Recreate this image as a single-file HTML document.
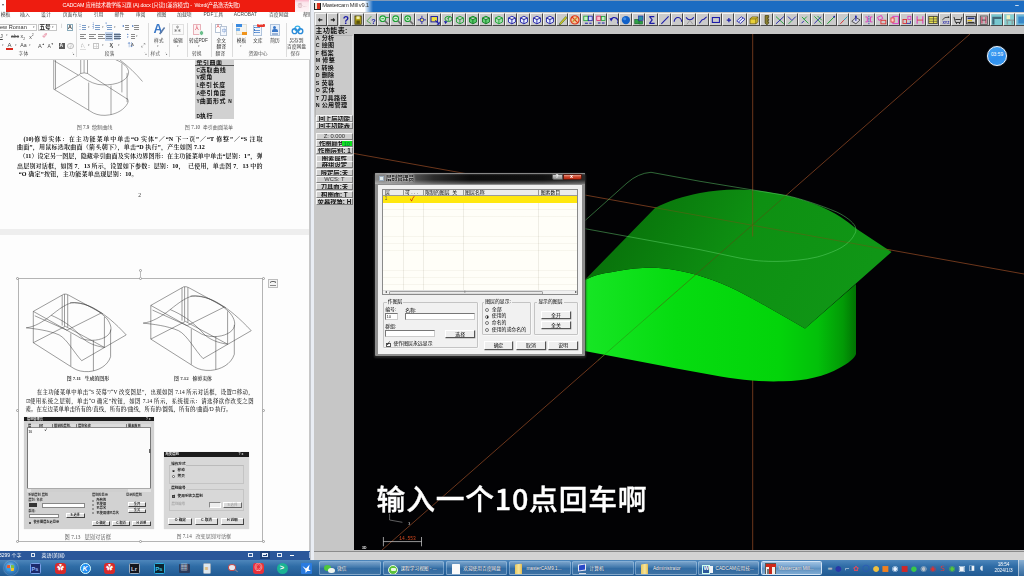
<!DOCTYPE html>
<html lang="zh-CN">
<head>
<meta charset="utf-8">
<title>Mastercam Mill v9.1</title>
<style>
*{box-sizing:border-box;margin:0;padding:0}
html,body{width:1024px;height:576px;overflow:hidden;background:#000}
body{position:relative;font-family:"Liberation Sans","Noto Sans CJK SC",sans-serif;font-size:6px;color:#222;line-height:1}
.a{position:absolute}
.t{position:absolute;white-space:nowrap;line-height:1}
small{font-size:4.8px;letter-spacing:0.2px}
.sf{font-family:"Liberation Serif","Noto Serif CJK SC",serif}
#word,#mc,#task,#dlg,#sub{filter:blur(0.35px)}
/* ---------- Word window ---------- */
#word{left:0;top:0;width:310.4px;height:560px;background:#fdfdfd;overflow:hidden}
#wtitle{left:6px;top:0;width:289px;height:12px;background:#ee1c10}
#wtabs{left:0;top:12px;width:310px;height:8px;background:#fff}
#wrib{left:0;top:20px;width:310px;height:40px;background:#fcfcfc;border-bottom:1px solid #d6d6d6}
#wstat{left:0;top:551px;width:311px;height:9px;background:#2b579a}
/* ---------- Mastercam window ---------- */
#mc{left:310px;top:0;width:714px;height:560px;background:#c6c6c6}
#mctitle{left:3px;top:0;width:711px;height:12px;background:#1b6cc2}
#canvas{left:44.3px;top:34px;width:670px;height:516.3px;background:#020204;overflow:hidden}
.gb{position:absolute;border:0.6px solid #c4c4c4;border-radius:1px;box-shadow:0.5px 0.5px 0 #fff}
.lb{font-size:4.9px;color:#000}
.inp{background:#fff;border:0.7px solid #777;border-right-color:#ccc;border-bottom-color:#ccc}
.btn{background:#efefef;border:0.6px solid #fff;border-right-color:#555;border-bottom-color:#555;box-shadow:0.4px 0.4px 0 #999;font-size:4.9px;color:#000;text-align:center;line-height:7px}
.rad{width:4.2px;height:4.2px;border-radius:50%;background:#fff;border:0.6px solid #777}
.rad i{position:absolute;left:0.8px;top:0.8px;width:1.4px;height:1.4px;border-radius:50%;background:#000}
.tb{position:absolute;top:0;height:12.7px;background:#cbcbcb;border:0.7px solid #f4f4f4;border-right-color:#4a4a4a;border-bottom-color:#4a4a4a;overflow:hidden}
.mb{font-size:6.1px;font-weight:bold;color:#111;letter-spacing:0.35px;font-family:"Liberation Sans","Noto Sans CJK SC",sans-serif}
.mbtn{left:1.6px;width:37.6px;height:7px;background:#d0d0d0;border:0.6px solid #f6f6f6;border-right-color:#7c7c7c;border-bottom-color:#7c7c7c;font-size:6.3px;font-weight:bold;color:#111;text-align:center;line-height:5.8px;white-space:nowrap;overflow:hidden}
.lat{font-weight:normal;color:#333;font-size:5.8px}
.wtab{top:1.3px;font-size:4.9px;color:#444;text-align:center}
.rl{font-size:4.8px;color:#555;text-align:center;width:40px;top:32.1px}
.rb{font-size:4.75px;color:#333;text-align:center;width:40px}
.rsep{position:absolute;top:3px;width:0.6px;height:34px;background:#dcdcdc}
.ri{position:absolute;font-size:5.6px;color:#555;line-height:1;white-space:nowrap}
.p1{font-size:6.05px;color:#000;font-weight:600;text-align:justify;text-align-last:justify;letter-spacing:0}
.p2{font-size:5.4px;color:#111;font-weight:500;text-align:justify;text-align-last:justify}
/* ---------- taskbar ---------- */
#task{left:0;top:560px;width:1024px;height:16px;background:linear-gradient(#4d86bb,#2f6ca6 40%,#215a92)}
</style>
</head>
<body>

<!-- ================= WORD ================= -->
<div id="word" class="a">
  <div id="wtitle" class="a">
    <div class="t" style="left:56.5px;top:3px;font-size:5.3px;color:#fff;letter-spacing:-0.2px">CADCAM 应用技术教学练习题 (A).docx [只读] [兼容模式] -&nbsp; Word(产品激活失败)</div>
  </div>
  <div class="a" style="left:0;top:0;width:6px;height:12px;background:#fff"></div>
  <div class="t" style="left:2px;top:4px;font-size:3.6px;color:#555">▾</div>
  <div class="a" style="left:295px;top:0;width:14px;height:12px;background:linear-gradient(#f8b8cc 0,#fbe6ec 22%,#fff6f8 100%)"></div>
  <div class="t" style="left:297.4px;top:3.4px;font-size:5px;color:#c8a0a8">登...</div>
  <div id="wtabs" class="a">
    <div class="t wtab" style="left:-14.4px;width:40px">模板</div>
    <div class="t wtab" style="left:5px;width:40px">插入</div>
    <div class="t wtab" style="left:26px;width:40px">设计</div>
    <div class="t wtab" style="left:52.5px;width:40px">页面布局</div>
    <div class="t wtab" style="left:78.4px;width:40px">引用</div>
    <div class="t wtab" style="left:99.4px;width:40px">邮件</div>
    <div class="t wtab" style="left:120.6px;width:40px">审阅</div>
    <div class="t wtab" style="left:141.6px;width:40px">视图</div>
    <div class="t wtab" style="left:164.4px;width:40px">加载项</div>
    <div class="t wtab" style="left:193.4px;width:40px">PDF工具</div>
    <div class="t wtab" style="left:225.3px;width:40px">ACROBAT</div>
    <div class="t wtab" style="left:258.75px;width:40px">百度网盘</div>
    <div class="t wtab" style="left:288px;width:40px">帮助</div>
  </div>
  <div id="wrib" class="a">
    <div class="a" style="left:-2px;top:3.6px;width:39px;height:7.6px;border:0.6px solid #c6c6c6;background:#fff"></div>
    <div class="t" style="left:0;top:4.9px;font-size:5.6px;color:#333">ew Roman</div><div class="t" style="left:33px;top:5.6px;font-size:3.4px;color:#666">▾</div>
    <div class="a" style="left:37.6px;top:3.6px;width:19px;height:7.6px;border:0.6px solid #c6c6c6;background:#fff"></div>
    <div class="t" style="left:39.4px;top:4.7px;font-size:5.6px;color:#222;font-weight:bold">五号</div><div class="t" style="left:52.4px;top:5.6px;font-size:3.4px;color:#666">▾</div>
    <div class="ri" style="left:58.6px;top:4.2px;color:#999">㆐</div>
    <div class="a" style="left:66.6px;top:4px;width:6.6px;height:7px;border:0.6px solid #8ab;"></div><div class="ri" style="left:67.9px;top:4.7px;font-size:5.4px;color:#333;font-weight:bold">A</div>
    <div class="ri" style="left:0;top:13.6px;color:#444"><u>J</u></div><div class="ri" style="left:6px;top:14.4px;font-size:3.4px;color:#777">▾</div>
    <div class="ri" style="left:11px;top:13.8px;font-size:5px;color:#555"><s>abc</s></div>
    <div class="ri" style="left:20.6px;top:13.6px;font-size:5.2px;color:#444">x<sub style="font-size:3.4px">2</sub></div>
    <div class="ri" style="left:29.2px;top:13.6px;font-size:5.2px;color:#444">x<sup style="font-size:3.4px">2</sup></div>
    <div class="ri" style="left:41.6px;top:12.8px;font-size:6.6px;color:#e06a86">✐</div>
    <div class="ri" style="left:2.4px;top:24px;font-size:3.4px;color:#777">▾</div>
    <div class="ri" style="left:7.4px;top:22.4px;font-size:6px;color:#444">A</div><div class="a" style="left:6.4px;top:28.2px;width:6.6px;height:1.6px;background:#d8281c"></div><div class="ri" style="left:15.4px;top:24px;font-size:3.4px;color:#777">▾</div>
    <div class="ri" style="left:20.2px;top:23px;font-size:5.2px;color:#444">Aa</div><div class="ri" style="left:28.6px;top:24px;font-size:3.4px;color:#777">▾</div>
    <div class="ri" style="left:38px;top:22.8px;font-size:5.6px;color:#444">A<sup style="font-size:3px">▲</sup></div>
    <div class="ri" style="left:47.4px;top:23.4px;font-size:5px;color:#444">A<sup style="font-size:3px">▼</sup></div>
    <div class="a" style="left:58.6px;top:22.6px;width:6px;height:6.4px;background:#5a5a5a"></div><div class="ri" style="left:59.4px;top:23.2px;font-size:5px;color:#fff;font-weight:bold">A</div>
    <div class="a" style="left:67.4px;top:22.8px;width:6.2px;height:6.2px;border-radius:50%;border:0.6px solid #bbb"></div><div class="ri" style="left:68.6px;top:23.6px;font-size:4.4px;color:#bbb">字</div>
    <div class="a" style="left:81.6px;top:5.0px;width:4.6px;height:0.7px;background:#7a9cc8"></div><div class="a" style="left:81.6px;top:7.2px;width:4.6px;height:0.7px;background:#7a9cc8"></div><div class="a" style="left:81.6px;top:9.4px;width:4.6px;height:0.7px;background:#7a9cc8"></div><div class="ri" style="left:79.4px;top:3.2px;font-size:3px;color:#4a78c0;line-height:2.2px">▪<br>▪<br>▪</div><div class="ri" style="left:88px;top:5.6px;font-size:3.4px;color:#777">▾</div>
    <div class="a" style="left:95.2px;top:5.0px;width:4.6px;height:0.7px;background:#7a9cc8"></div><div class="a" style="left:95.2px;top:7.2px;width:4.6px;height:0.7px;background:#7a9cc8"></div><div class="a" style="left:95.2px;top:9.4px;width:4.6px;height:0.7px;background:#7a9cc8"></div><div class="ri" style="left:92.6px;top:3.8px;font-size:2.6px;color:#4a78c0;line-height:2.2px">1<br>2<br>3</div><div class="ri" style="left:101.6px;top:5.6px;font-size:3.4px;color:#777">▾</div>
    <div class="a" style="left:107.4px;top:4.6px;width:4.6px;height:0.7px;background:#7a9cc8"></div><div class="a" style="left:107.4px;top:6.8px;width:4.6px;height:0.7px;background:#7a9cc8"></div><div class="a" style="left:107.4px;top:9.0px;width:4.6px;height:0.7px;background:#7a9cc8"></div><div class="ri" style="left:105.6px;top:3.4px;font-size:2.6px;color:#4a78c0;line-height:2.2px">a<br>&nbsp;i<br>&nbsp;&nbsp;·</div><div class="ri" style="left:114.2px;top:5.6px;font-size:3.4px;color:#777">▾</div>
    <div class="a" style="left:125px;top:5.2px;width:4.4px;height:0.7px;background:#8a8a8a"></div><div class="a" style="left:125px;top:7.2px;width:4.4px;height:0.7px;background:#8a8a8a"></div><div class="a" style="left:125px;top:9.2px;width:4.4px;height:0.7px;background:#8a8a8a"></div><div class="ri" style="left:122.4px;top:5.2px;font-size:3.6px;color:#4a78c0">◂</div>
    <div class="a" style="left:134.2px;top:5.2px;width:4.4px;height:0.7px;background:#8a8a8a"></div><div class="a" style="left:134.2px;top:7.2px;width:4.4px;height:0.7px;background:#8a8a8a"></div><div class="a" style="left:134.2px;top:9.2px;width:4.4px;height:0.7px;background:#8a8a8a"></div><div class="ri" style="left:131.6px;top:5.2px;font-size:3.6px;color:#4a78c0">▸</div>
    <div class="a" style="left:79.6px;top:14.2px;width:6.4px;height:0.7px;background:#8a8a8a"></div><div class="a" style="left:79.6px;top:16.3px;width:4.5px;height:0.7px;background:#8a8a8a"></div><div class="a" style="left:79.6px;top:18.4px;width:6.4px;height:0.7px;background:#8a8a8a"></div>
    <div class="a" style="left:89.4px;top:14.2px;width:6.4px;height:0.7px;background:#8a8a8a"></div><div class="a" style="left:89.4px;top:16.3px;width:4.5px;height:0.7px;background:#8a8a8a"></div><div class="a" style="left:89.4px;top:18.4px;width:6.4px;height:0.7px;background:#8a8a8a"></div>
    <div class="a" style="left:98.4px;top:14.2px;width:6.4px;height:0.7px;background:#8a8a8a"></div><div class="a" style="left:98.4px;top:16.3px;width:4.5px;height:0.7px;background:#8a8a8a"></div><div class="a" style="left:98.4px;top:18.4px;width:6.4px;height:0.7px;background:#8a8a8a"></div>
    <div class="a" style="left:104.6px;top:12.2px;width:8.6px;height:8.4px;background:#c5d6ee"></div><div class="a" style="left:105.8px;top:14.2px;width:6.4px;height:0.7px;background:#6a7a90"></div><div class="a" style="left:105.8px;top:16.3px;width:6.4px;height:0.7px;background:#6a7a90"></div><div class="a" style="left:105.8px;top:18.4px;width:6.4px;height:0.7px;background:#6a7a90"></div>
    <div class="a" style="left:114.4px;top:13.2px;width:6px;height:6.8px;background:#b8c8dc"></div><div class="a" style="left:114.2px;top:14.2px;width:6.4px;height:0.7px;background:#5a6a80"></div><div class="a" style="left:114.2px;top:16.3px;width:6.4px;height:0.7px;background:#5a6a80"></div><div class="a" style="left:114.2px;top:18.4px;width:6.4px;height:0.7px;background:#5a6a80"></div>
    <div class="a" style="left:130.6px;top:14.2px;width:4.2px;height:0.7px;background:#8a8a8a"></div><div class="a" style="left:130.6px;top:16.3px;width:4.2px;height:0.7px;background:#8a8a8a"></div><div class="a" style="left:130.6px;top:18.4px;width:4.2px;height:0.7px;background:#8a8a8a"></div><div class="ri" style="left:126.6px;top:12.6px;font-size:3.4px;color:#4a78c0;line-height:3.4px">▴<br>▾</div><div class="ri" style="left:136px;top:14.6px;font-size:3.4px;color:#777">▾</div>
    <div class="ri" style="left:79.6px;top:22.6px;font-size:6px;color:#666">♘</div><div class="a" style="left:79.6px;top:28.6px;width:6px;height:1.2px;background:#ddd"></div><div class="ri" style="left:88px;top:24px;font-size:3.4px;color:#777">▾</div>
    <div class="a" style="left:93.4px;top:22.8px;width:6px;height:6px;border:0.6px solid #c4c4c4;background:linear-gradient(#c4c4c4,#c4c4c4) 50% 0/0.5px 100% no-repeat,linear-gradient(#c4c4c4,#c4c4c4) 0 50%/100% 0.5px no-repeat"></div><div class="ri" style="left:101.6px;top:24px;font-size:3.4px;color:#777">▾</div>
    <div class="ri" style="left:109.6px;top:22.8px;font-size:5.2px;color:#444;font-weight:bold">Ӽ</div><div class="ri" style="left:118px;top:24px;font-size:3.4px;color:#777">▾</div>
    <div class="ri" style="left:127.4px;top:22.6px;font-size:5.6px;color:#4a78c0">⇅</div><div class="ri" style="left:131px;top:23.4px;font-size:4.4px;color:#666">A</div>
    <div class="ri" style="left:141px;top:23px;font-size:5.4px;color:#555">⤢</div>
    <div class="rsep" style="left:75.8px"></div>
    <div class="rsep" style="left:147.7px"></div>
    <div class="rsep" style="left:168.6px"></div>
    <div class="rsep" style="left:186.5px"></div>
    <div class="rsep" style="left:210.8px"></div>
    <div class="rsep" style="left:231.9px"></div>
    <div class="rsep" style="left:285.8px"></div>
    <div class="t rl" style="left:3.3999999999999986px">字体</div>
    <div class="t rl" style="left:89.4px">段落</div>
    <div class="t rl" style="left:135.3px">样式</div>
    <div class="t rl" style="left:176.7px">转换</div>
    <div class="t rl" style="left:200.2px">翻译</div>
    <div class="t rl" style="left:238px">资源中心</div>
    <div class="t rl" style="left:275.2px">保存</div>
    <div class="ri" style="left:71.6px;top:33px;font-size:3.2px;color:#777">↘</div><div class="ri" style="left:144px;top:33px;font-size:3.2px;color:#777">↘</div><div class="ri" style="left:164.6px;top:33px;font-size:3.2px;color:#777">↘</div>
    <div class="ri" style="left:153.6px;top:2.6px;font-size:12.5px;color:#3a78c8;font-weight:bold">A</div><svg class="a" style="left:158px;top:6px" width="8" height="9" viewBox="0 0 8 9"><path d="M1,7.6 L6,1 L7.2,2 L2.4,8.4 Z" fill="#5a7aa8"/></svg>
    <div class="t rb" style="left:138.8px;top:18.8px">样式</div><div class="ri" style="left:157.4px;top:24.6px;font-size:3.4px;color:#777">▾</div>
    <div class="a" style="left:171.6px;top:3.6px;width:12.6px;height:11.6px;border:0.6px solid #e0e0e0;background:#fafafa"></div><div class="ri" style="left:173.6px;top:5.6px;font-size:8px;color:#555">⁂</div>
    <div class="t rb" style="left:158px;top:18.8px">编辑</div><div class="ri" style="left:177px;top:24.6px;font-size:3.4px;color:#777">▾</div>
    <div class="a" style="left:192.6px;top:3.6px;width:8.6px;height:11px;border:0.6px solid #e8b0b8;background:#fdf2f3;border-radius:0.6px"></div><div class="ri" style="left:194.6px;top:5.2px;font-size:6.6px;color:#e05060">⅄</div><div class="a" style="left:199px;top:10.4px;width:5.4px;height:5.4px;border-radius:50%;background:#6cbf8c;border:0.6px solid #fff"></div>
    <div class="t rb" style="left:178.4px;top:18.8px">转成PDF</div><div class="ri" style="left:197.6px;top:24.6px;font-size:3.4px;color:#777">▾</div>
    <div class="a" style="left:215.4px;top:3.8px;width:7px;height:9.4px;border:0.6px solid #b8c4d4;background:#fff"></div><div class="a" style="left:220.4px;top:6.4px;width:7px;height:9.4px;border:0.6px solid #b8c4d4;background:#f4f8fe"></div><div class="ri" style="left:216.6px;top:5.4px;font-size:4.6px;color:#e05050">A</div><div class="ri" style="left:222px;top:9px;font-size:4.2px;color:#4a78c0">中</div>
    <div class="t rb" style="left:201.2px;top:18.8px">全文</div><div class="t rb" style="left:201.2px;top:24.6px">翻译</div>
    <div class="a" style="left:235.6px;top:4px;width:11.4px;height:11.4px;background:#f4f4f0;border:0.5px solid #e0e0d8"></div><div class="a" style="left:236px;top:4.4px;width:6px;height:3px;background:#3a8ae0"></div><div class="a" style="left:236px;top:8.2px;width:4.4px;height:3px;background:#7ab4ec"></div><div class="a" style="left:241.6px;top:11.6px;width:5px;height:3.4px;background:#f0941c"></div>
    <div class="t rb" style="left:221.4px;top:18.8px">模板</div><div class="ri" style="left:240.4px;top:24.6px;font-size:3.4px;color:#777">▾</div>
    <div class="a" style="left:252.6px;top:5px;width:9.6px;height:11px;border:0.6px solid #b0c4dc;background:#f2f6fc"></div><div class="a" style="left:255.4px;top:7.4px;width:5.0px;height:0.7px;background:#6a9ad8"></div><div class="a" style="left:255.4px;top:9.8px;width:5.0px;height:0.7px;background:#6a9ad8"></div><div class="a" style="left:255.4px;top:12.2px;width:5.0px;height:0.7px;background:#6a9ad8"></div><div class="a" style="left:253.6px;top:7px;width:1.4px;height:1.4px;background:#3a78c8"></div><div class="a" style="left:253.6px;top:9.4px;width:1.4px;height:1.4px;background:#3a78c8"></div><div class="a" style="left:253.6px;top:11.8px;width:1.4px;height:1.4px;background:#3a78c8"></div><div class="a" style="left:257.2px;top:3.6px;width:7.6px;height:3.4px;border-radius:1px;background:#e8382c"></div><div class="ri" style="left:258px;top:4px;font-size:2.6px;color:#fff;font-weight:bold">New</div>
    <div class="t rb" style="left:237.8px;top:18.8px">文库</div>
    <div class="a" style="left:269.6px;top:4px;width:10.6px;height:12px;border:0.6px solid #b0c4dc;background:#eaf1fb"></div><div class="a" style="left:273.4px;top:5.6px;width:3px;height:3px;border-radius:50%;background:#3a78c8"></div><div class="a" style="left:272px;top:9px;width:5.8px;height:2.6px;border-radius:2px 2px 0 0;background:#3a78c8"></div><div class="a" style="left:272px;top:12.6px;width:5.6px;height:0.6px;background:#9ab4d8"></div><div class="a" style="left:272px;top:14.2px;width:5.6px;height:0.6px;background:#9ab4d8"></div>
    <div class="t rb" style="left:255px;top:18.8px">简历</div>
    <svg class="a" style="left:290.6px;top:5px" width="13" height="10" viewBox="0 0 13 10"><circle cx="6.5" cy="3.6" r="2.5" fill="none" stroke="#38b0e8" stroke-width="1.4"/><circle cx="3.6" cy="6.2" r="2.4" fill="none" stroke="#2a8ad8" stroke-width="1.4"/><circle cx="9.4" cy="6.2" r="2.4" fill="none" stroke="#2a8ad8" stroke-width="1.4"/></svg>
    <div class="t rb" style="left:276.4px;top:18.8px">另存到</div><div class="t rb" style="left:276.4px;top:24.6px">百度网盘</div>
  </div>
  <div id="wdoc" class="a" style="left:0;top:60px;width:310px;height:491px;overflow:hidden">
    <svg class="a" style="left:0;top:0" width="310" height="70" viewBox="0 60 310 70" fill="none" stroke="#4a4a4a" stroke-width="0.5"><path d="M 53.7,59.7 V 89.5 M 55.5,59.7 V 89.5 M 54.3,60.9 L 78.4,75.2 M 54.3,89.5 L 78.4,75.2 L 80.7,73.5 M 80.7,59.7 V 73.5 M 84.1,59.7 V 72.7 M 87.5,59.7 V 73.5 M 80.7,73.5 Q 84.1,72.2 87.5,73.5 M 87.5,73.5 L 127.6,99.3 M 54.3,89.5 L 93.3,113.0 C 97.9,115.3 103.6,115.9 109.3,114.9 C 117.3,113.6 124.2,109.6 127.6,103.3 C 128.6,101.3 128.2,99.5 126.7,98.1 M 115.6,59.7 C 123.1,62.6 128.2,67.2 128.6,71.8 C 128.8,76.9 124.2,80.9 117.3,83.2 C 111.6,85.0 103.6,85.3 97.9,84.4 C 91.0,83.0 84.1,78.6 79.5,75.2 M 119.6,59.7 C 128.8,66.6 135.7,73.5 142.5,81.5 M 88.7,82.6 V 110.1 M 111.0,85.5 V 114.7 M 121.9,63.7 V 92.4 M 127.1,72.9 V 102.1"/></svg>
    <div class="t sf" style="left:74.5px;top:64.6px;font-size:5.1px;color:#444;width:40px;text-align:center">图 7.9&nbsp;&nbsp;绘制曲线</div>
    <div class="a" style="left:195.4px;top:0;width:39px;height:59px;background:#d1d1d1"></div>
    <div class="a" style="left:195.4px;top:4.6px;width:39px;height:0.7px;background:#555"></div>
    <div class="t" style="left:196.4px;top:-1.2px;font-size:6px;font-weight:bold;color:#111;letter-spacing:0.55px">牵引曲面</div>
    <div class="t" style="left:196.4px;top:6.8px;font-size:6px;font-weight:bold;color:#111;letter-spacing:0.55px"><small>C</small>选取曲线</div>
    <div class="t" style="left:196.4px;top:14.4px;font-size:6px;font-weight:bold;color:#111;letter-spacing:0.55px"><small>V</small>视角</div>
    <div class="t" style="left:196.4px;top:22.2px;font-size:6px;font-weight:bold;color:#111;letter-spacing:0.55px"><small>L</small>牵引长度</div>
    <div class="t" style="left:196.4px;top:30.0px;font-size:6px;font-weight:bold;color:#111;letter-spacing:0.55px"><small>A</small>牵引角度</div>
    <div class="t" style="left:196.4px;top:37.6px;font-size:6px;font-weight:bold;color:#111;letter-spacing:0.55px"><small>Y</small>曲面形式 <small>N</small></div>
    <div class="t" style="left:196.4px;top:52.8px;font-size:6px;font-weight:bold;color:#111;letter-spacing:0.55px"><small>D</small>执行</div>
    <div class="t sf" style="left:184px;top:64.6px;font-size:5.1px;color:#444;width:50px;text-align:center">图 7.10&nbsp;&nbsp;牵引曲面菜单</div>
    <div class="t sf p1" style="left:23.4px;top:75.5px;width:239.1px">(10)修剪实体：在主功能菜单中单击“O 实体”／“N 下一页”／“T 修整”／“S 注取</div>
    <div class="t sf p1" style="left:17px;top:84.3px;width:187.7px">曲面”，用鼠标选取曲面（箭头朝下），单击“D 执行”，产生如图 7.12</div>
    <div class="t sf p1" style="left:19.4px;top:93.3px;width:243.1px">（11）设定另一图层，隐藏牵引曲面及实体边界图形：在主功能菜单中单击“层别：1”，弹</div>
    <div class="t sf p1" style="left:17px;top:102.7px;width:245.5px">出层别对话框，如图 7．13 所示，设置如下参数：层别：10，&nbsp;&nbsp;已使用，单击图 7．13 中的</div>
    <div class="t sf p1" style="left:18.8px;top:111.4px;width:118.7px">“O 确定”按钮，主功能菜单出现层别：10。</div>
    <div class="t sf" style="left:138.2px;top:133px;font-size:5.6px;color:#333">2</div>
    <div class="a" style="left:0;top:169px;width:309px;height:5.6px;background:#eeeeee"></div>
    <div class="a" style="left:309.2px;top:0;width:0.8px;height:491px;background:#c8c8c8"></div>
    <div class="a" style="left:17.6px;top:218.2px;width:245.6px;height:263.6px;border:0.6px solid #b4b4b4"></div>
    <div class="a" style="left:16.1px;top:216.7px;width:3px;height:3px;border-radius:50%;background:#fff;border:0.5px solid #999"></div>
    <div class="a" style="left:138.9px;top:216.7px;width:3px;height:3px;border-radius:50%;background:#fff;border:0.5px solid #999"></div>
    <div class="a" style="left:261.7px;top:216.7px;width:3px;height:3px;border-radius:50%;background:#fff;border:0.5px solid #999"></div>
    <div class="a" style="left:16.1px;top:348.5px;width:3px;height:3px;border-radius:50%;background:#fff;border:0.5px solid #999"></div>
    <div class="a" style="left:261.7px;top:348.5px;width:3px;height:3px;border-radius:50%;background:#fff;border:0.5px solid #999"></div>
    <div class="a" style="left:16.1px;top:480.3px;width:3px;height:3px;border-radius:50%;background:#fff;border:0.5px solid #999"></div>
    <div class="a" style="left:138.9px;top:480.3px;width:3px;height:3px;border-radius:50%;background:#fff;border:0.5px solid #999"></div>
    <div class="a" style="left:261.7px;top:480.3px;width:3px;height:3px;border-radius:50%;background:#fff;border:0.5px solid #999"></div>
    <div class="a" style="left:138.9px;top:209.1px;width:3px;height:3px;border-radius:50%;background:#fff;border:0.5px solid #999"></div>
    <div class="a" style="left:140.1px;top:212px;width:0.6px;height:6px;background:#bbb"></div>
    <div class="a" style="left:268.4px;top:218.6px;width:9.6px;height:9.6px;background:#f4f4f4;border:0.6px solid #bdbdbd"></div><div class="a" style="left:270.4px;top:221px;width:5.6px;height:2.4px;border-radius:2.4px 2.4px 0 0;border:0.8px solid #666;border-bottom:none"></div><div class="a" style="left:270px;top:224.6px;width:6.4px;height:0.7px;background:#888"></div>
    <svg class="a" style="left:0;top:220px" width="280" height="100" viewBox="0 280 280 100" fill="none" stroke="#3a3a3a" stroke-width="0.5"><path d="M 33.3,311.4 L 63.8,294.2 Q 66.1,293.6 68.4,295.0 L 102.8,313.8 M 70.0,302.8 C 82.5,301.3 95.0,307.5 105.2,316.9 C 109.8,321.6 111.9,327.1 110.6,331.0 C 109.1,336.4 101.2,340.3 91.9,340.3 C 85.6,340.3 80.9,338.8 77.8,336.4 M 33.3,311.4 L 77.8,336.4 M 33.3,311.4 V 342.7 M 62.2,295.2 V 325.5 M 64.5,294.2 V 326.3 M 67.7,294.9 V 327.1 M 70.8,333.3 V 366.1 M 93.4,340.3 V 370.8 M 104.4,316.9 V 347.4 M 110.6,329.4 V 356.8 M 33.3,342.7 L 73.9,368.5 C 77.8,370.8 82.5,371.9 88.8,371.6 C 98.1,370.8 107.5,366.1 110.6,356.8 M 33.3,342.7 L 65.3,326.3 L 104.4,347.4 M 34.8,315.8 L 66.9,330.2 M 66.9,330.2 L 101.2,313.0 M 26.2,327.8 C 34.1,327.1 43.4,321.6 51.2,315.3 C 59.1,309.1 65.3,304.4 71.6,302.8 M 71.6,302.8 C 87.2,302.1 104.4,311.4 126.2,334.9 M 126.2,334.9 L 81.7,360.7 M 26.2,327.8 C 35.6,328.9 48.1,330.2 59.1,334.9 C 66.9,338.8 74.7,353.6 81.7,360.7 M 51.2,315.3 C 60.6,319.2 71.6,325.5 82.5,338.0 C 87.2,342.7 95.0,346.1 104.4,347.4"/><path d="M 150.8,305.4 L 183.7,286.8 Q 186.2,286.2 188.8,287.7 L 225.9,307.9 M 190.5,296.1 C 204.0,294.4 217.5,301.2 228.4,311.3 C 233.5,316.4 235.7,322.3 234.3,326.5 C 232.6,332.4 224.2,336.6 214.1,336.6 C 207.3,336.6 202.3,334.9 198.9,332.4 M 150.8,305.4 L 198.9,332.4 M 150.8,305.4 V 339.1 M 182.0,287.8 V 320.6 M 184.6,286.8 V 321.4 M 187.9,287.5 V 322.3 M 191.3,329.0 V 364.5 M 215.8,336.6 V 369.5 M 227.6,311.3 V 344.2 M 234.3,324.8 V 354.3 M 150.8,339.1 L 194.7,367.0 C 198.9,369.5 204.0,370.7 210.7,370.4 C 220.8,369.5 231.0,364.5 234.3,354.3 M 150.8,339.1 L 185.4,321.4 L 227.6,344.2 M 152.5,310.1 L 187.1,325.6 M 187.1,325.6 L 224.2,307.1 M 143.2,323.1 C 151.6,322.3 161.8,316.4 170.2,309.6 C 178.6,302.9 185.4,297.8 192.1,296.1 M 192.1,296.1 C 209.0,295.3 227.6,305.4 251.2,330.7 M 251.2,330.7 L 203.1,358.6 M 143.2,323.1 C 153.3,324.3 166.8,325.6 178.6,330.7 C 187.1,334.9 195.5,351.0 203.1,358.6 M 170.2,309.6 C 180.3,313.8 192.1,320.6 204.0,334.1 C 209.0,339.1 217.5,342.9 227.6,344.2"/></svg>
    <div class="t sf" style="left:57.9px;top:317.4px;font-size:4.9px;color:#333;width:60px;text-align:center;font-weight:bold">图 7.11&nbsp;&nbsp;&nbsp;生成的图形</div>
    <div class="t sf" style="left:163px;top:317.4px;font-size:4.9px;color:#333;width:60px;text-align:center;font-weight:bold">图 7.12&nbsp;&nbsp;&nbsp;修剪实体</div>
    <div class="a" style="left:24.2px;top:357.2px;width:130.3px;height:112.2px;background:#d2d2d2;box-shadow:0 0 0.6px #888"></div>
    <div class="a" style="left:24.2px;top:357.2px;width:130.3px;height:4.3px;background:#1a1a1a"></div>
    <div class="t" style="left:27.0px;top:357.8px;font-size:3.2px;color:#eee;font-weight:bold;">层别管理员</div>
    <div class="t" style="left:146.0px;top:357.8px;font-size:3.2px;color:#ddd;font-weight:bold;">? x</div>
    <div class="a" style="left:26.9px;top:364.0px;width:124.1px;height:68.0px;background:#fbfbfb;border:0.5px solid #777"></div>
    <div class="a" style="left:26.9px;top:364.0px;width:124.1px;height:4.4px;background:#dcdcdc;border-bottom:0.5px solid #888"></div>
    <div class="t" style="left:28.0px;top:364.7px;font-size:3.2px;color:#222;font-weight:bold;">层</div>
    <div class="t" style="left:40.0px;top:364.7px;font-size:3.2px;color:#222;font-weight:bold;">可</div>
    <div class="t" style="left:54.0px;top:364.7px;font-size:3.2px;color:#222;font-weight:bold;">限制的层别.</div>
    <div class="t" style="left:78.0px;top:364.7px;font-size:3.2px;color:#222;font-weight:bold;">层别名称</div>
    <div class="t" style="left:128.0px;top:364.7px;font-size:3.2px;color:#222;font-weight:bold;">图素数目</div>
    <div class="a" style="left:38.6px;top:364.0px;width:0.5px;height:4.4px;background:#777"></div>
    <div class="a" style="left:51.6px;top:364.0px;width:0.5px;height:4.4px;background:#777"></div>
    <div class="a" style="left:76.0px;top:364.0px;width:0.5px;height:4.4px;background:#777"></div>
    <div class="a" style="left:125.6px;top:364.0px;width:0.5px;height:4.4px;background:#777"></div>
    <div class="t" style="left:28.4px;top:371.0px;font-size:3.2px;color:#444;font-weight:bold;">10</div>
    <div class="t" style="left:44.6px;top:369.2px;font-size:3.6px;color:#222;font-weight:bold;">✓</div>
    <div class="a" style="left:26.9px;top:428.2px;width:124.1px;height:3.8px;background:#e2e2e2;border-top:0.5px solid #aaa"></div>
    <div class="a" style="left:31.0px;top:428.8px;width:97.0px;height:2.8px;background:#cfcfcf"></div>
    <div class="a" style="left:148.6px;top:389.0px;width:2.8px;height:3.6px;background:#ddd;border:0.5px solid #666"></div>
    <div class="t" style="left:28.0px;top:434.1px;font-size:3.2px;color:#333;font-weight:bold;">系统层别  层别</div>
    <div class="t" style="left:28.6px;top:439.3px;font-size:3px;color:#333;font-weight:bold;">层别:   名称</div>
    <div class="a" style="left:29.0px;top:443.0px;width:7.6px;height:4.4px;background:#333"></div>
    <div class="a" style="left:41.6px;top:443.0px;width:43.4px;height:4.7px;background:#fff;border:0.5px solid #888"></div>
    <div class="t" style="left:28.6px;top:449.9px;font-size:3px;color:#333;font-weight:bold;">群组:</div>
    <div class="a" style="left:29.0px;top:453.7px;width:30.4px;height:4.8px;background:#fff;border:0.5px solid #888"></div>
    <div class="a" style="left:66.4px;top:453.4px;width:19.1px;height:5.1px;background:#dedede;border:0.5px solid #fff;border-right-color:#444;border-bottom-color:#444"></div>
    <div class="t" style="left:70.4px;top:454.4px;font-size:3.2px;color:#222;font-weight:bold;">S 选择</div>
    <div class="a" style="left:29.0px;top:461.6px;width:2.4px;height:2.4px;background:#fff;border:0.5px solid #555"></div>
    <div class="t" style="left:33.6px;top:461.3px;font-size:3.2px;color:#222;font-weight:bold;">使作图层永远显示</div>
    <div class="t" style="left:92.0px;top:434.1px;font-size:3.2px;color:#333;font-weight:bold;">层别的显示</div>
    <div class="a" style="left:92.0px;top:439.5px;width:2.4px;height:2.4px;background:#fff;border:0.5px solid #666;border-radius:50%"></div>
    <div class="t" style="left:96.6px;top:439.1px;font-size:3.2px;color:#222;font-weight:bold;">所有的</div>
    <div class="a" style="left:92.0px;top:443.7px;width:2.4px;height:2.4px;background:#fff;border:0.5px solid #666;border-radius:50%"></div>
    <div class="t" style="left:96.6px;top:443.3px;font-size:3.2px;color:#222;font-weight:bold;">已使用</div>
    <div class="a" style="left:92.0px;top:447.6px;width:2.4px;height:2.4px;background:#fff;border:0.5px solid #666;border-radius:50%"></div>
    <div class="t" style="left:96.6px;top:447.2px;font-size:3.2px;color:#222;font-weight:bold;">已命名</div>
    <div class="a" style="left:92.0px;top:451.9px;width:2.4px;height:2.4px;background:#fff;border:0.5px solid #666;border-radius:50%"></div>
    <div class="t" style="left:96.6px;top:451.5px;font-size:3.2px;color:#222;font-weight:bold;">已使用或已命名</div>
    <div class="t" style="left:126.0px;top:434.1px;font-size:3.2px;color:#333;font-weight:bold;">显示的层别</div>
    <div class="a" style="left:127.8px;top:442.2px;width:18.4px;height:4.4px;background:#dedede;border:0.5px solid #fff;border-right-color:#444;border-bottom-color:#444"></div>
    <div class="t" style="left:127.8px;top:442.8px;width:18.4px;text-align:center;font-size:3.2px;color:#222;font-weight:bold">全开</div>
    <div class="a" style="left:127.8px;top:448.8px;width:18.4px;height:4.3px;background:#dedede;border:0.5px solid #fff;border-right-color:#444;border-bottom-color:#444"></div>
    <div class="t" style="left:127.8px;top:449.4px;width:18.4px;text-align:center;font-size:3.2px;color:#222;font-weight:bold">全关</div>
    <div class="a" style="left:92.0px;top:460.7px;width:17.8px;height:5.4px;background:#dedede;border:0.5px solid #fff;border-right-color:#444;border-bottom-color:#444"></div>
    <div class="t" style="left:92.0px;top:461.8px;width:17.8px;text-align:center;font-size:3.2px;color:#222;font-weight:bold">O 确定</div>
    <div class="a" style="left:112.0px;top:460.7px;width:18.0px;height:5.4px;background:#dedede;border:0.5px solid #fff;border-right-color:#444;border-bottom-color:#444"></div>
    <div class="t" style="left:112.0px;top:461.8px;width:18.0px;text-align:center;font-size:3.2px;color:#222;font-weight:bold">C 取消</div>
    <div class="a" style="left:132.0px;top:460.7px;width:18.6px;height:5.4px;background:#dedede;border:0.5px solid #fff;border-right-color:#444;border-bottom-color:#444"></div>
    <div class="t" style="left:132.0px;top:461.8px;width:18.6px;text-align:center;font-size:3.2px;color:#222;font-weight:bold">H 说明</div>
    <div class="t sf" style="left:57.8px;top:474.6px;font-size:5.3px;color:#555;width:60px;text-align:center">图 7.13&nbsp;&nbsp;&nbsp;层别对话框</div>
    <div class="a" style="left:164.0px;top:392.0px;width:85.0px;height:76.7px;background:#d8d8d8;box-shadow:0 0 0.6px #888"></div>
    <div class="a" style="left:164.0px;top:392.0px;width:85.0px;height:5.2px;background:#1c1c1c"></div>
    <div class="t" style="left:165.4px;top:393.0px;font-size:3.4px;color:#eee;font-weight:bold;">改变层别</div>
    <div class="t" style="left:238.4px;top:393.0px;font-size:3.4px;color:#ddd;font-weight:bold;">? x</div>
    <div class="a" style="left:168.6px;top:404.6px;width:75.0px;height:19.4px;border:0.5px solid #c4c4c4;border-top-color:#bbb"></div>
    <div class="t" style="left:170.6px;top:403.1px;font-size:3.6px;color:#222;font-weight:bold;background:#d8d8d8;padding:0 0.6px;">操作方式</div>
    <div class="a" style="left:172.4px;top:409.6px;width:2.8px;height:2.8px;background:#fff;border:0.5px solid #555;border-radius:50%"></div>
    <div class="a" style="left:173.3px;top:410.5px;width:1.0px;height:1.0px;background:#111;border-radius:50%"></div>
    <div class="t" style="left:177.6px;top:409.2px;font-size:3.6px;color:#222;font-weight:bold;">移动</div>
    <div class="a" style="left:172.4px;top:415.4px;width:2.8px;height:2.8px;background:#fff;border:0.5px solid #555;border-radius:50%"></div>
    <div class="t" style="left:177.6px;top:415.0px;font-size:3.6px;color:#222;font-weight:bold;">拷贝</div>
    <div class="a" style="left:168.6px;top:429.0px;width:75.0px;height:21.6px;border:0.5px solid #c4c4c4"></div>
    <div class="t" style="left:170.6px;top:427.4px;font-size:3.6px;color:#222;font-weight:bold;background:#d8d8d8;padding:0 0.6px;">层别编号</div>
    <div class="a" style="left:172.4px;top:435.4px;width:3.0px;height:3.0px;background:#fff;border:0.5px solid #444"></div>
    <div class="t" style="left:172.7px;top:435.3px;font-size:3px;color:#111;font-weight:bold;">✓</div>
    <div class="t" style="left:177.6px;top:435.0px;font-size:3.6px;color:#222;font-weight:bold;">使用系统之层别</div>
    <div class="t" style="left:171.6px;top:443.3px;font-size:3.4px;color:#aaa;font-weight:bold;">层别编号</div>
    <div class="a" style="left:209.0px;top:442.0px;width:11.7px;height:6.0px;background:#eee;border:0.5px solid #888;border-right-color:#fff;border-bottom-color:#fff"></div>
    <div class="a" style="left:223.0px;top:442.2px;width:19.4px;height:5.8px;background:#dcdcdc;border:0.5px solid #fff;border-right-color:#666;border-bottom-color:#666"></div>
    <div class="t" style="left:227.4px;top:443.5px;font-size:3.4px;color:#aaa;font-weight:bold;">S 选择</div>
    <div class="a" style="left:168.4px;top:457.5px;width:23.9px;height:7.1px;background:#e0e0e0;border:0.5px solid #fff;border-right-color:#444;border-bottom-color:#444"></div>
    <div class="t" style="left:168.4px;top:459.2px;width:23.9px;text-align:center;font-size:3.6px;color:#222;font-weight:bold">O 确定</div>
    <div class="a" style="left:195.0px;top:457.5px;width:23.0px;height:7.1px;background:#e0e0e0;border:0.5px solid #fff;border-right-color:#444;border-bottom-color:#444"></div>
    <div class="t" style="left:195.0px;top:459.2px;width:23.0px;text-align:center;font-size:3.6px;color:#222;font-weight:bold">C 取消</div>
    <div class="a" style="left:220.7px;top:457.5px;width:23.3px;height:7.1px;background:#e0e0e0;border:0.5px solid #fff;border-right-color:#444;border-bottom-color:#444"></div>
    <div class="t" style="left:220.7px;top:459.2px;width:23.3px;text-align:center;font-size:3.6px;color:#222;font-weight:bold">H 说明</div>
    <div class="t sf" style="left:168.8px;top:474px;font-size:5.1px;color:#555;width:70px;text-align:center">图 7.14&nbsp;&nbsp;&nbsp;改变层别对话框</div>
    <div class="t sf p2" style="left:36.8px;top:330.3px;width:216.8px">在主功能菜单中单击“S 荧幕”/“V 改变图层”，出现如图 7.14 所示对话框，设置☐移动，</div>
    <div class="t sf p2" style="left:25.5px;top:338.8px;width:228.1px">☑使用系统之层别，单击“O 确定”按钮，如图 7.14 所示，系统提示：请选择欲作改变之图</div>
    <div class="t sf p2" style="left:25.5px;top:347.4px;width:206.0px">素。在左边菜单单击所有的/直线，所有的/曲线，所有的/圆弧，所有的/曲面/D 执行。</div>
  </div>
  <div id="wstat" class="a">
    <div class="t" style="left:-1px;top:1.6px;font-size:5px;color:#fff">3299 个字</div>
    <div class="a" style="left:30.6px;top:1.6px;width:4.4px;height:4.8px;border:0.6px solid #dfe8f4;border-radius:0.4px"></div>
    <div class="t" style="left:41.4px;top:1.5px;font-size:5px;color:#fff">英语(美国)</div>
    <div class="a" style="left:247.6px;top:1.8px;width:5px;height:4.4px;border:0.6px solid #e4ecf8"></div>
    <div class="a" style="left:260px;top:0;width:10px;height:8px;background:#1f4279"></div>
    <div class="a" style="left:262.4px;top:1.8px;width:5.2px;height:4.4px;border:0.6px solid #e4ecf8"></div>
    <div class="a" style="left:263.4px;top:3.2px;width:3px;height:0.6px;background:#e4ecf8"></div>
    <div class="a" style="left:277.4px;top:1.8px;width:5px;height:4.4px;border:0.6px solid #e4ecf8"></div>
    <div class="a" style="left:290.4px;top:3.6px;width:3.6px;height:0.8px;background:#fff"></div>
    <div class="a" style="left:309.4px;top:0.6px;width:0.8px;height:6.8px;background:#9ab4dc"></div>
  </div>
</div>

<!-- ================= MASTERCAM ================= -->
<div id="mc" class="a">
  <div id="mctitle" class="a">
    <div class="a" style="left:0;top:0;width:711px;height:1px;background:#7f9ab8"></div>
    <div class="a" style="left:0;top:1px;width:60px;height:11px;background:linear-gradient(90deg,#fff 0,#fff 86%,rgba(255,255,255,0) 100%)"></div>
    <div class="a" style="left:1.2px;top:2.6px;width:6.6px;height:7.4px;background:#3a3a3a;border:0.5px solid #222"></div>
    <div class="a" style="left:2px;top:3.2px;width:1.7px;height:6px;background:#e8e0d0"></div>
    <div class="a" style="left:4.4px;top:3.2px;width:2.4px;height:6px;background:#d83020"></div>
    <div class="t" style="left:9.2px;top:2.9px;font-size:5.8px;color:#333;letter-spacing:-0.26px">Mastercam Mill v9.1</div>
    <div class="t" style="left:702px;top:1px;font-size:7px;color:#fff;font-weight:bold">–</div>
  </div>
  <div id="mctool" class="a" style="left:0;top:13px;width:714px;height:13.2px;overflow:hidden">
    <div class="tb" style="left:4.60px;width:12.10px"><svg style="position:absolute;left:-0.85px;top:-0.2px" width="12.2" height="12.2" viewBox="0 0 12.4 12.4"><path d="M3.5,6 h4 M3.5,6 l1.6,-1.4 M3.5,6 l1.6,1.4" stroke="#222" stroke-width="1.1" fill="none"/></svg></div>
    <div class="tb" style="left:16.70px;width:11.70px"><svg style="position:absolute;left:-0.85px;top:-0.2px" width="12.2" height="12.2" viewBox="0 0 12.4 12.4"><path d="M3.8,6 h4 M7.8,6 l-1.6,-1.4 M7.8,6 l-1.6,1.4" stroke="#222" stroke-width="1.1" fill="none"/></svg></div>
    <div class="tb" style="left:28.50px;width:12.77px"><svg style="position:absolute;left:-0.01px;top:-0.2px" width="12.2" height="12.2" viewBox="0 0 12.4 12.4"><text x="6" y="10" font-size="10.5" font-weight="bold" fill="#1c1ca8" text-anchor="middle" font-family="Liberation Sans,sans-serif">?</text></svg></div>
    <div class="tb" style="left:41.27px;width:12.77px"><svg style="position:absolute;left:-0.01px;top:-0.2px" width="12.2" height="12.2" viewBox="0 0 12.4 12.4"><rect x="3" y="2" width="6.4" height="8.4" fill="#b8a818" stroke="#3a3408" stroke-width="0.8"/><rect x="4.6" y="2.4" width="3.2" height="2.6" fill="#f2eeb0"/><rect x="4.4" y="6.6" width="3.6" height="3.4" fill="#5a5208"/></svg></div>
    <div class="tb" style="left:54.04px;width:12.77px"><svg style="position:absolute;left:-0.01px;top:-0.2px" width="12.2" height="12.2" viewBox="0 0 12.4 12.4"><path d="M6.4,2.2 L2,7 L6,9.8" stroke="#58a858" stroke-width="1" fill="none"/><text x="8.6" y="10" font-size="7.5" font-weight="bold" fill="#1c1ca8" text-anchor="middle" font-family="Liberation Sans,sans-serif">?</text></svg></div>
    <div class="tb" style="left:66.81px;width:12.77px"><svg style="position:absolute;left:-0.01px;top:-0.2px" width="12.2" height="12.2" viewBox="0 0 12.4 12.4"><circle cx="4.8" cy="4.8" r="2.9" fill="#d8f0d8" stroke="#18a030" stroke-width="1.1"/><path d="M7,7 L10.3,10.3" stroke="#6a6a6a" stroke-width="1.5"/><path d="M3.4,4.8 h2.8 M8,3.6 h3" stroke="#18a030" stroke-width="0.9"/></svg></div>
    <div class="tb" style="left:79.58px;width:12.77px"><svg style="position:absolute;left:-0.01px;top:-0.2px" width="12.2" height="12.2" viewBox="0 0 12.4 12.4"><circle cx="4.8" cy="4.8" r="2.9" fill="#d8f0d8" stroke="#18a030" stroke-width="1.1"/><path d="M7,7 L10.3,10.3" stroke="#6a6a6a" stroke-width="1.5"/><path d="M3.4,4.8 h2.8" stroke="#18a030" stroke-width="0.9"/></svg></div>
    <div class="tb" style="left:92.35px;width:12.77px"><svg style="position:absolute;left:-0.01px;top:-0.2px" width="12.2" height="12.2" viewBox="0 0 12.4 12.4"><circle cx="4.8" cy="4.8" r="2.9" fill="#d8f0d8" stroke="#18a030" stroke-width="1.1"/><path d="M7,7 L10.3,10.3" stroke="#6a6a6a" stroke-width="1.5"/><path d="M3.4,4.8 h2.8 M4.8,3.4 v2.8" stroke="#18a030" stroke-width="0.9"/></svg></div>
    <div class="tb" style="left:105.12px;width:12.77px"><svg style="position:absolute;left:-0.01px;top:-0.2px" width="12.2" height="12.2" viewBox="0 0 12.4 12.4"><path d="M6,1.8 v8.4 M1.8,6 h8.4" stroke="#1c1ca8" stroke-width="0.9"/><rect x="4.6" y="4.6" width="2.8" height="2.8" fill="#e8e060" stroke="#1c1ca8" stroke-width="0.6"/></svg></div>
    <div class="tb" style="left:117.89px;width:12.77px"><svg style="position:absolute;left:-0.01px;top:-0.2px" width="12.2" height="12.2" viewBox="0 0 12.4 12.4"><rect x="2" y="2.6" width="6.6" height="5.4" fill="#f0e040" stroke="#1c1ca8" stroke-width="1"/><path d="M6.4,6.4 L10.4,10.4 M10.4,10.4 v-2.4 M10.4,10.4 h-2.4" stroke="#1c1ca8" stroke-width="1.1" fill="none"/></svg></div>
    <div class="tb" style="left:130.66px;width:12.77px"><svg style="position:absolute;left:-0.01px;top:-0.2px" width="12.2" height="12.2" viewBox="0 0 12.4 12.4"><ellipse cx="6.6" cy="5" rx="3.6" ry="2.6" fill="none" stroke="#18a030" stroke-width="1"/><path d="M2.4,7 l1.2,2.8 l1.6,-2.2" fill="#1c1ca8" stroke="#1c1ca8" stroke-width="0.6"/><path d="M5,5 l3,-1.6 M6.6,3 v4" stroke="#18a030" stroke-width="0.7"/></svg></div>
    <div class="tb" style="left:143.43px;width:12.77px"><svg style="position:absolute;left:-0.01px;top:-0.2px" width="12.2" height="12.2" viewBox="0 0 12.4 12.4"><path d="M2.5,4 L6,2.3 L9.6,4 L9.6,8.2 L6,10 L2.5,8.2 Z M2.5,4 L6,5.8 L9.6,4 M6,5.8 L6,10" fill="none" stroke="#18a030" stroke-width="0.9"/></svg></div>
    <div class="tb" style="left:156.20px;width:12.77px"><svg style="position:absolute;left:-0.01px;top:-0.2px" width="12.2" height="12.2" viewBox="0 0 12.4 12.4"><path d="M2.5,4 L6,2.3 L9.6,4 L9.6,8.2 L6,10 L2.5,8.2 Z M2.5,4 L6,5.8 L9.6,4 M6,5.8 L6,10" fill="#58c868" stroke="#0c7a20" stroke-width="0.9"/></svg></div>
    <div class="tb" style="left:168.97px;width:12.77px"><svg style="position:absolute;left:-0.01px;top:-0.2px" width="12.2" height="12.2" viewBox="0 0 12.4 12.4"><path d="M2.5,4 L6,2.3 L9.6,4 L9.6,8.2 L6,10 L2.5,8.2 Z M2.5,4 L6,5.8 L9.6,4 M6,5.8 L6,10" fill="#68d078" stroke="#0c7a20" stroke-width="0.9"/></svg></div>
    <div class="tb" style="left:181.74px;width:12.77px"><svg style="position:absolute;left:-0.01px;top:-0.2px" width="12.2" height="12.2" viewBox="0 0 12.4 12.4"><path d="M2.5,4 L6,2.3 L9.6,4 L9.6,8.2 L6,10 L2.5,8.2 Z M2.5,4 L6,5.8 L9.6,4 M6,5.8 L6,10" fill="#a8e0b0" stroke="#18a030" stroke-width="0.9"/></svg></div>
    <div class="tb" style="left:194.51px;width:12.77px"><svg style="position:absolute;left:-0.01px;top:-0.2px" width="12.2" height="12.2" viewBox="0 0 12.4 12.4"><path d="M2.5,4 L6,2.3 L9.6,4 L9.6,8.2 L6,10 L2.5,8.2 Z M2.5,4 L6,5.8 L9.6,4 M6,5.8 L6,10" fill="#e8f0ff" stroke="#1c1ca8" stroke-width="0.9"/></svg></div>
    <div class="tb" style="left:207.28px;width:12.77px"><svg style="position:absolute;left:-0.01px;top:-0.2px" width="12.2" height="12.2" viewBox="0 0 12.4 12.4"><path d="M2.5,4 L6,2.3 L9.6,4 L9.6,8.2 L6,10 L2.5,8.2 Z M2.5,4 L6,5.8 L9.6,4 M6,5.8 L6,10" fill="#e8f0ff" stroke="#1c1ca8" stroke-width="0.9"/></svg></div>
    <div class="tb" style="left:220.05px;width:12.77px"><svg style="position:absolute;left:-0.01px;top:-0.2px" width="12.2" height="12.2" viewBox="0 0 12.4 12.4"><path d="M2.5,4 L6,2.3 L9.6,4 L9.6,8.2 L6,10 L2.5,8.2 Z M2.5,4 L6,5.8 L9.6,4 M6,5.8 L6,10" fill="#e8f0ff" stroke="#1c1ca8" stroke-width="0.9"/></svg></div>
    <div class="tb" style="left:232.82px;width:12.77px"><svg style="position:absolute;left:-0.01px;top:-0.2px" width="12.2" height="12.2" viewBox="0 0 12.4 12.4"><path d="M2.5,4 L6,2.3 L9.6,4 L9.6,8.2 L6,10 L2.5,8.2 Z M2.5,4 L6,5.8 L9.6,4 M6,5.8 L6,10" fill="#e8f0ff" stroke="#1c1ca8" stroke-width="0.9"/></svg></div>
    <div class="tb" style="left:245.59px;width:12.77px"><svg style="position:absolute;left:-0.01px;top:-0.2px" width="12.2" height="12.2" viewBox="0 0 12.4 12.4"><path d="M2.4,9.8 L8.8,2.6 L10.2,3.8 L3.8,10.6 Z" fill="#e0c020" stroke="#4a8a30" stroke-width="0.7"/><path d="M2.4,9.8 L3.8,10.6 L2,11 Z" fill="#333"/></svg></div>
    <div class="tb" style="left:258.36px;width:12.77px"><svg style="position:absolute;left:-0.01px;top:-0.2px" width="12.2" height="12.2" viewBox="0 0 12.4 12.4"><circle cx="6" cy="6" r="4.2" fill="#f0c8a0" stroke="#e03818" stroke-width="1.2"/><path d="M3,3 L9,9" stroke="#e03818" stroke-width="1.2"/><path d="M3.6,8 L8,3.6" stroke="#c09020" stroke-width="1.2"/></svg></div>
    <div class="tb" style="left:271.13px;width:12.77px"><svg style="position:absolute;left:-0.01px;top:-0.2px" width="12.2" height="12.2" viewBox="0 0 12.4 12.4"><rect x="1.8" y="2.2" width="4.2" height="4.6" fill="#c8f0c8" stroke="#18a030" stroke-width="0.8"/><rect x="6.6" y="2.2" width="3.8" height="4.6" fill="#d0d8ff" stroke="#1c1ca8" stroke-width="0.8"/><path d="M3,9.4 h3 M7.4,9.4 h2.4" stroke="#1c1ca8" stroke-width="1"/></svg></div>
    <div class="tb" style="left:283.90px;width:12.77px"><svg style="position:absolute;left:-0.01px;top:-0.2px" width="12.2" height="12.2" viewBox="0 0 12.4 12.4"><rect x="1.8" y="2.2" width="4" height="4.4" fill="#ffc0d0" stroke="#d02060" stroke-width="0.8"/><rect x="6.4" y="2.6" width="3.8" height="4" fill="#c8f0c8" stroke="#18a030" stroke-width="0.8"/><path d="M3,9.2 h2.6 M7,9.2 h2.8" stroke="#1c1ca8" stroke-width="1"/></svg></div>
    <div class="tb" style="left:296.67px;width:12.77px"><svg style="position:absolute;left:-0.01px;top:-0.2px" width="12.2" height="12.2" viewBox="0 0 12.4 12.4"><path d="M9.6,9.6 A3.8,3.8 0 1 0 3,5.4" stroke="#1c1ca8" stroke-width="1.3" fill="none"/><path d="M1.4,4.2 L3.2,7.6 L5.2,4.4 Z" fill="#1c1ca8"/></svg></div>
    <div class="tb" style="left:309.44px;width:12.77px"><svg style="position:absolute;left:-0.01px;top:-0.2px" width="12.2" height="12.2" viewBox="0 0 12.4 12.4"><circle cx="6" cy="6.2" r="4.2" fill="#1060c8"/><circle cx="4.8" cy="4.8" r="1.6" fill="#4a98f0" opacity=".8"/></svg></div>
    <div class="tb" style="left:322.21px;width:12.77px"><svg style="position:absolute;left:-0.01px;top:-0.2px" width="12.2" height="12.2" viewBox="0 0 12.4 12.4"><rect x="1.8" y="5.6" width="4.2" height="4.4" fill="#30a048" stroke="#0a5a20" stroke-width="0.6"/><rect x="5.6" y="2" width="4.6" height="4.4" fill="#2890a0" stroke="#1c1ca8" stroke-width="0.6"/><rect x="6.4" y="7.2" width="3.4" height="3" fill="#30a048" stroke="#0a5a20" stroke-width="0.5"/></svg></div>
    <div class="tb" style="left:334.98px;width:12.77px"><svg style="position:absolute;left:-0.01px;top:-0.2px" width="12.2" height="12.2" viewBox="0 0 12.4 12.4"><text x="6" y="10.2" font-size="10.5" font-weight="bold" fill="#1c1ca8" text-anchor="middle" font-family="Liberation Sans,sans-serif">Σ</text></svg></div>
    <div class="tb" style="left:347.75px;width:12.77px"><svg style="position:absolute;left:-0.01px;top:-0.2px" width="12.2" height="12.2" viewBox="0 0 12.4 12.4"><path d="M2.4,10 L9.8,2.4" stroke="#1c1ca8" stroke-width="1.1"/></svg></div>
    <div class="tb" style="left:360.52px;width:12.77px"><svg style="position:absolute;left:-0.01px;top:-0.2px" width="12.2" height="12.2" viewBox="0 0 12.4 12.4"><path d="M2.2,8 A3.8,4.4 0 0 1 9.8,8" stroke="#1c1ca8" stroke-width="1.1" fill="none"/></svg></div>
    <div class="tb" style="left:373.29px;width:12.77px"><svg style="position:absolute;left:-0.01px;top:-0.2px" width="12.2" height="12.2" viewBox="0 0 12.4 12.4"><path d="M2,3.4 Q6,8.4 10,3.4" stroke="#1c1ca8" stroke-width="1.1" fill="none"/><path d="M3,10.4 L6,6.4 L9,10.4" stroke="#888" stroke-width="0.7" fill="none"/></svg></div>
    <div class="tb" style="left:386.06px;width:12.77px"><svg style="position:absolute;left:-0.01px;top:-0.2px" width="12.2" height="12.2" viewBox="0 0 12.4 12.4"><path d="M2,9.4 C4,9.4 4,5.6 6,5.6 S8,3.4 10,3" stroke="#1c1ca8" stroke-width="1.1" fill="none"/></svg></div>
    <div class="tb" style="left:398.83px;width:12.77px"><svg style="position:absolute;left:-0.01px;top:-0.2px" width="12.2" height="12.2" viewBox="0 0 12.4 12.4"><rect x="2.4" y="3.6" width="7.2" height="5" fill="none" stroke="#1c1ca8" stroke-width="1.1"/></svg></div>
    <div class="tb" style="left:411.60px;width:12.77px"><svg style="position:absolute;left:-0.01px;top:-0.2px" width="12.2" height="12.2" viewBox="0 0 12.4 12.4"><path d="M6,4 v4.4 M3.8,6.2 h4.4" stroke="#1c1ca8" stroke-width="1.2"/></svg></div>
    <div class="tb" style="left:424.37px;width:12.77px"><svg style="position:absolute;left:-0.01px;top:-0.2px" width="12.2" height="12.2" viewBox="0 0 12.4 12.4"><path d="M1.8,7 L6.4,2.8 L10.2,5.2 L5.6,9.6 Z M3.6,8.2 L8.2,4 " fill="#e8eeff" stroke="#1c1ca8" stroke-width="0.8"/></svg></div>
    <div class="tb" style="left:437.14px;width:12.77px"><svg style="position:absolute;left:-0.01px;top:-0.2px" width="12.2" height="12.2" viewBox="0 0 12.4 12.4"><path d="M2,5 L4,3 L10,3 L10,8 L8,10 L2,10 Z" fill="#e8d038" stroke="#5a4a08" stroke-width="0.7"/><path d="M2,5 H8 V10 M8,5 L10,3" fill="none" stroke="#5a4a08" stroke-width="0.7"/></svg></div>
    <div class="tb" style="left:449.91px;width:12.77px"><svg style="position:absolute;left:-0.01px;top:-0.2px" width="12.2" height="12.2" viewBox="0 0 12.4 12.4"><path d="M4.2,1.6 h3.6 v2 h-1 v1.4 h1 v1.6 h-1 v1.4 h1 v1.4 L6,11 L4.2,9.4 Z" fill="#8a8030" stroke="#3a3408" stroke-width="0.7"/></svg></div>
    <div class="tb" style="left:462.68px;width:12.77px"><svg style="position:absolute;left:-0.01px;top:-0.2px" width="12.2" height="12.2" viewBox="0 0 12.4 12.4"><path d="M2,2.6 L10,10" stroke="#18a030" stroke-width="0.9"/><path d="M10,2.6 L2,10" stroke="#1c1ca8" stroke-width="0.9"/></svg></div>
    <div class="tb" style="left:475.45px;width:12.77px"><svg style="position:absolute;left:-0.01px;top:-0.2px" width="12.2" height="12.2" viewBox="0 0 12.4 12.4"><path d="M2,2.6 L6,6.6 L10,2.6" stroke="#1c1ca8" stroke-width="0.9" fill="none"/><path d="M6,6.6 L2.6,10" stroke="#18a030" stroke-width="0.9"/></svg></div>
    <div class="tb" style="left:488.22px;width:12.77px"><svg style="position:absolute;left:-0.01px;top:-0.2px" width="12.2" height="12.2" viewBox="0 0 12.4 12.4"><path d="M3,3 L9.6,9.6 M8,2.6 L5.2,5.4" stroke="#18a030" stroke-width="0.9"/><path d="M2.6,9.4 L5,7" stroke="#1c1ca8" stroke-width="0.9"/></svg></div>
    <div class="tb" style="left:500.99px;width:12.77px"><svg style="position:absolute;left:-0.01px;top:-0.2px" width="12.2" height="12.2" viewBox="0 0 12.4 12.4"><path d="M2.4,2.4 L9.6,9.8 M5.6,2 L10,6.4" stroke="#18a030" stroke-width="0.9"/><path d="M9.4,2.6 L2.4,9.6" stroke="#1c1ca8" stroke-width="0.9"/></svg></div>
    <div class="tb" style="left:513.76px;width:12.77px"><svg style="position:absolute;left:-0.01px;top:-0.2px" width="12.2" height="12.2" viewBox="0 0 12.4 12.4"><path d="M2.4,10 L9.4,2.8" stroke="#18a030" stroke-width="1"/><circle cx="9.4" cy="2.8" r="0.9" fill="#1c1ca8"/></svg></div>
    <div class="tb" style="left:526.53px;width:12.77px"><svg style="position:absolute;left:-0.01px;top:-0.2px" width="12.2" height="12.2" viewBox="0 0 12.4 12.4"><path d="M2.4,10 L6,6.2" stroke="#e03030" stroke-width="1"/><path d="M6,6.2 L9.6,2.6" stroke="#20a0c0" stroke-width="1"/></svg></div>
    <div class="tb" style="left:539.30px;width:12.77px"><svg style="position:absolute;left:-0.01px;top:-0.2px" width="12.2" height="12.2" viewBox="0 0 12.4 12.4"><path d="M1.8,7.4 L6,3.6 L10.2,6 L6,10 Z" fill="#d8d8e8" stroke="#333" stroke-width="0.8"/><path d="M6,1.6 V7" stroke="#1c1ca8" stroke-width="1"/><path d="M4.8,3.2 L6,1.4 L7.2,3.2Z" fill="#1c1ca8"/></svg></div>
    <div class="tb" style="left:552.07px;width:12.77px"><svg style="position:absolute;left:-0.01px;top:-0.2px" width="12.2" height="12.2" viewBox="0 0 12.4 12.4"><path d="M6,1.8 V10.4" stroke="#1c1ca8" stroke-width="0.8" stroke-dasharray="1.6 0.8"/><path d="M2.4,3 h2 v5 h-2 M9.6,3 h-2 v5 h2" stroke="#e040c0" stroke-width="1" fill="none"/></svg></div>
    <div class="tb" style="left:564.84px;width:12.77px"><svg style="position:absolute;left:-0.01px;top:-0.2px" width="12.2" height="12.2" viewBox="0 0 12.4 12.4"><rect x="2" y="2.4" width="4.4" height="3.4" fill="none" stroke="#e040c0" stroke-width="0.9" transform="rotate(-25 4 4)"/><rect x="5" y="6.4" width="5" height="3.6" fill="none" stroke="#e03030" stroke-width="0.9"/></svg></div>
    <div class="tb" style="left:577.61px;width:12.77px"><svg style="position:absolute;left:-0.01px;top:-0.2px" width="12.2" height="12.2" viewBox="0 0 12.4 12.4"><rect x="4" y="2.4" width="5.6" height="7.4" fill="none" stroke="#e040c0" stroke-width="1"/><rect x="2" y="4" width="3.2" height="4.2" fill="#ffd0d0" stroke="#e03030" stroke-width="0.8"/></svg></div>
    <div class="tb" style="left:590.38px;width:12.77px"><svg style="position:absolute;left:-0.01px;top:-0.2px" width="12.2" height="12.2" viewBox="0 0 12.4 12.4"><rect x="2" y="5.6" width="3.6" height="4" fill="none" stroke="#e03030" stroke-width="0.9"/><rect x="7" y="2.4" width="3" height="3.2" fill="none" stroke="#e040c0" stroke-width="0.9"/><path d="M5.6,9.6 h4 v-2.6" stroke="#1c1ca8" stroke-width="0.8" fill="none"/></svg></div>
    <div class="tb" style="left:603.15px;width:12.77px"><svg style="position:absolute;left:-0.01px;top:-0.2px" width="12.2" height="12.2" viewBox="0 0 12.4 12.4"><path d="M3.2,2.2 V10 M9,2.2 V10" stroke="#e040c0" stroke-width="1.1"/><path d="M3.2,6.2 H9" stroke="#e03030" stroke-width="0.9"/></svg></div>
    <div class="tb" style="left:615.92px;width:12.77px"><svg style="position:absolute;left:-0.01px;top:-0.2px" width="12.2" height="12.2" viewBox="0 0 12.4 12.4"><rect x="1.8" y="2.4" width="8.6" height="7.4" fill="#e8e050" stroke="#333" stroke-width="0.8"/><path d="M1.8,5 h8.6 M1.8,7.4 h8.6 M6.6,2.4 v7.4" stroke="#333" stroke-width="0.6"/></svg></div>
    <div class="tb" style="left:628.69px;width:12.77px"><svg style="position:absolute;left:-0.01px;top:-0.2px" width="12.2" height="12.2" viewBox="0 0 12.4 12.4"><path d="M2.4,6 Q5,2.6 8,3.4" stroke="#333" stroke-width="0.9" fill="none"/><circle cx="8.6" cy="3.2" r="0.9" fill="#333"/><text x="6" y="10.4" font-size="3.6" font-weight="bold" fill="#1c1ca8" text-anchor="middle" font-family="Liberation Sans,sans-serif">XYZ</text></svg></div>
    <div class="tb" style="left:641.46px;width:12.77px"><svg style="position:absolute;left:-0.01px;top:-0.2px" width="12.2" height="12.2" viewBox="0 0 12.4 12.4"><path d="M2,3 L3.6,8.6 H8.6 L10.2,3 M3.4,5.6 H8.8 M4.6,8.6 V10.2 M7.6,8.6 V10.2" stroke="#333" stroke-width="1" fill="none"/></svg></div>
    <div class="tb" style="left:654.23px;width:12.77px"><svg style="position:absolute;left:-0.01px;top:-0.2px" width="12.2" height="12.2" viewBox="0 0 12.4 12.4"><rect x="1.6" y="2.6" width="9" height="7.4" fill="#d8d8d8" stroke="#333" stroke-width="0.8"/><rect x="2.6" y="3.6" width="7" height="1.6" fill="#203080"/><rect x="2.6" y="6" width="4.6" height="1.4" fill="#e0c020"/><rect x="2.6" y="8" width="7" height="1.2" fill="#333"/></svg></div>
    <div class="tb" style="left:667.00px;width:12.77px"><svg style="position:absolute;left:-0.01px;top:-0.2px" width="12.2" height="12.2" viewBox="0 0 12.4 12.4"><rect x="2.4" y="2" width="7.2" height="8.6" fill="#b8b8b8" stroke="#555" stroke-width="0.8"/><path d="M4,3 v6.6 M8,3 v6.6" stroke="#e03060" stroke-width="1"/><path d="M4,6.2 h4" stroke="#333" stroke-width="0.8"/></svg></div>
    <div class="tb" style="left:679.77px;width:12.77px"><svg style="position:absolute;left:-0.01px;top:-0.2px" width="12.2" height="12.2" viewBox="0 0 12.4 12.4"><rect x="0.4" y="0.4" width="11.6" height="11.6" fill="#78c8d0"/><path d="M2.4,10.6 V4 H10.6" stroke="#406878" stroke-width="2.2" fill="none"/></svg></div>
    <div class="tb" style="left:692.54px;width:12.77px"><svg style="position:absolute;left:-0.01px;top:-0.2px" width="12.2" height="12.2" viewBox="0 0 12.4 12.4"><rect x="0.4" y="0.4" width="11.6" height="11.6" fill="#88d0d0"/><rect x="2.6" y="1.2" width="3.6" height="4" fill="#f0f0c0"/><path d="M2,6.4 H10.6 M3.4,6.4 V10.6 M8.4,6.4 V10.6" stroke="#88a0a0" stroke-width="1.6" fill="none"/></svg></div>
    <div class="tb" style="left:705.31px;width:12.77px"><svg style="position:absolute;left:-0.01px;top:-0.2px" width="12.2" height="12.2" viewBox="0 0 12.4 12.4"><rect x="0.4" y="0.4" width="11.6" height="11.6" fill="#70b8d8"/><rect x="2.4" y="2.6" width="9" height="7" fill="#3888c8"/></svg></div>
  </div>
  <div id="mcmenu" class="a" style="left:4px;top:26px;width:40px;height:524px">
    <div class="t mb" style="left:1.6px;top:0.6px;font-size:7px">主功能表:</div>
    <div class="a" style="left:0.6px;top:8.6px;width:38.8px;height:83px;border:0.5px solid #b4b4b4;border-right-color:#dcdcdc;border-bottom-color:#dcdcdc;background:#cacaca"></div>
    <div class="t mb" style="left:1.8px;top:8.70px"><u style="text-decoration:none;font-size:5.3px;letter-spacing:0">A</u> 分析</div>
    <div class="t mb" style="left:1.8px;top:16.22px"><u style="text-decoration:none;font-size:5.3px;letter-spacing:0">C</u> 绘图</div>
    <div class="t mb" style="left:1.8px;top:23.74px"><u style="text-decoration:none;font-size:5.3px;letter-spacing:0">F</u> 档案</div>
    <div class="t mb" style="left:1.8px;top:31.26px"><u style="text-decoration:none;font-size:5.3px;letter-spacing:0">M</u> 修整</div>
    <div class="t mb" style="left:1.8px;top:38.78px"><u style="text-decoration:none;font-size:5.3px;letter-spacing:0">X</u> 转换</div>
    <div class="t mb" style="left:1.8px;top:46.30px"><u style="text-decoration:none;font-size:5.3px;letter-spacing:0">D</u> 删除</div>
    <div class="t mb" style="left:1.8px;top:53.82px"><u style="text-decoration:none;font-size:5.3px;letter-spacing:0">S</u> 荧幕</div>
    <div class="t mb" style="left:1.8px;top:61.34px"><u style="text-decoration:none;font-size:5.3px;letter-spacing:0">O</u> 实体</div>
    <div class="t mb" style="left:1.8px;top:68.86px"><u style="text-decoration:none;font-size:5.3px;letter-spacing:0">T</u> 刀具路径</div>
    <div class="t mb" style="left:1.8px;top:76.38px"><u style="text-decoration:none;font-size:5.3px;letter-spacing:0">N</u> 公用管理</div>
    <div class="a mbtn" style="top:88.80px">回上层功能</div>
    <div class="a mbtn" style="top:95.90px">回主功能表</div>
    <div class="a mbtn lat" style="top:107.00px">Z: 0.000</div>
    <div class="a mbtn" style="top:114.10px;text-align:left;padding-left:2.4px">作图颜色<span style="position:absolute;right:0;top:0;width:10.6px;height:6.4px;background:#10e020;color:#064;font-size:5px;line-height:6.4px;text-align:center;font-weight:normal">10</span></div>
    <div class="a mbtn" style="top:121.30px">作图层别: 1</div>
    <div class="a mbtn" style="top:128.50px">图素属性</div>
    <div class="a mbtn" style="top:135.30px">群组设定</div>
    <div class="a mbtn" style="top:142.80px">限定层:关</div>
    <div class="a mbtn lat" style="top:149.80px">WCS: T</div>
    <div class="a mbtn" style="top:156.90px">刀具面:关</div>
    <div class="a mbtn" style="top:164.50px">构图面: T</div>
    <div class="a mbtn" style="top:171.50px">荧幕视角: H</div>
  </div>
  <div class="a" style="left:0;top:0;width:1px;height:560px;background:#c4c7cc"></div><div class="a" style="left:1px;top:0;width:3px;height:560px;background:#e9edf4"></div>
  <div class="a" style="left:4px;top:550.6px;width:710px;height:0.9px;background:#8c8c8c"></div>
  <div class="a" style="left:4px;top:551.5px;width:710px;height:8.5px;background:#d3d3d3"></div>
  <div id="canvas" class="a">
    <svg id="cv" class="a" style="left:0;top:0" width="670" height="516" viewBox="354 34 670 516">
      <defs>
        <linearGradient id="gw" gradientUnits="userSpaceOnUse" x1="578" y1="0" x2="857" y2="0">
          <stop offset="0" stop-color="#18e626"/>
          <stop offset="0.35" stop-color="#06dc10"/>
          <stop offset="0.72" stop-color="#03d40a"/>
          <stop offset="0.86" stop-color="#03c00a"/>
          <stop offset="0.95" stop-color="#029a06"/>
          <stop offset="1" stop-color="#017003"/>
        </linearGradient>
        <linearGradient id="gt" gradientUnits="userSpaceOnUse" x1="620" y1="200" x2="840" y2="320">
          <stop offset="0" stop-color="#08700a"/>
          <stop offset="0.5" stop-color="#0e9012"/>
          <stop offset="1" stop-color="#109616"/>
        </linearGradient>
      </defs>
      <!-- axes behind -->
      <g stroke="#a8542a" stroke-width="0.75" fill="none" opacity="0.85">
        <line x1="752.7" y1="34" x2="752.7" y2="550"/>
        <line x1="970" y1="34" x2="382" y2="550"/>
        <line x1="354" y1="153.5" x2="1024" y2="274"/>
      </g>
      <!-- front wall -->
      <path fill="url(#gw)" d="M574,291 L584.7,280 C594,275.5 602,273.5 611,272.3 C622,270 632,268.4 642.5,267.9 C653,267.5 663,268 673.75,269.7 C684,271.5 695,274 705,277.5 C716,281 726,285 736,290 C747,295.5 757,301 767.5,307 L792.5,321.3 L805,328.5 L856,284 L856,354 C855,358 848,363.5 839.4,368 C832,372 824,375.5 814.4,377.5 C804,380 794,381.2 783,381.3 C772,381.6 762,381.4 751.9,380.6 C741,379.6 731,378.2 720.6,376.6 L673.75,368 L611,356 L574,349 Z"/>
      <!-- top face -->
      <path fill="url(#gt)" d="M574,291 L655,208 C668,201 684,196 700,193 C713,190.5 726,189.3 739,189.5 C755,189.8 771,192 786,195.4 C797,198 807,201 817,205 C826,208.5 834,212.5 840.6,217 C846,220.5 851,224.5 856,228.6 L891.5,252 L805,328.5 L792.5,321.3 L767.5,307 C757,301 747,295.5 736,290 C726,285 716,281 705,277.5 C695,274 684,271.5 673.75,269.7 C663,268 653,267.5 642.5,267.9 C632,268.4 622,270 611,272.3 C602,273.5 594,275.5 584.7,280 Z"/>
      <!-- axes over body (dim) -->
      <g stroke="#5a4a10" stroke-width="0.7" fill="none" opacity="0.75">
        <line x1="752.7" y1="190" x2="752.7" y2="236.5" stroke="#a04018"/>
        <line x1="786.5" y1="195" x2="655" y2="310.4"/>
        <line x1="655" y1="310.4" x2="598" y2="360.4" stroke="#2c8a10"/>
        <line x1="655" y1="207.7" x2="891" y2="250.3" stroke="#6a5a14"/>
      </g>
      <!-- wireframe outline -->
      <path fill="none" stroke="#62d870" stroke-width="0.6" opacity="0.8" d="M584,221.5 L627,183 Q638,173.2 651,172.3 L700,181.3 L786,195.4 C800,198.5 820,205 836.7,212 C846,216.5 853,222 855.3,226.6 C856.5,230 856,232.5 854.3,234.5 C853,238 850,240.5 848.4,242.3 C845,245.5 841,248 836.7,250 C830,253 824,255.2 817.2,257 C811,258.5 804,259.6 797.7,260.2 C791,261 785,261.3 778,261.4 C771,261.5 765,261.3 758.6,260.8 C752,260.2 745,259 739,257.9 L700,249.7 L584,228.5"/>
      <!-- scale indicator -->
      <g stroke="#d8d8d8" stroke-width="0.7" fill="none">
        <line x1="383.4" y1="541.6" x2="421.5" y2="541.6"/>
        <line x1="383.4" y1="537" x2="383.4" y2="546.3"/>
        <line x1="421.5" y1="537" x2="421.5" y2="546.3"/>
        <polyline points="389.6,513.8 389.6,520 402.4,522.3" stroke="#bbb" stroke-width="0.5"/>
      </g>
      <text x="399.3" y="540" font-family="Liberation Mono, monospace" font-size="4.6" fill="#d84a20">14.553</text>
      <text x="408.3" y="525.3" font-family="Liberation Sans, sans-serif" font-size="3.6" fill="#ddd">3</text>
      <text x="362" y="548.6" font-family="Liberation Sans, sans-serif" font-size="3.4" fill="#eee" font-weight="bold">3D</text>
    </svg>
  </div>
</div>


<!-- ================= LAYER DIALOG ================= -->
<div id="dlg" class="a" style="left:375px;top:173px;width:210px;height:183px;background:#8e8e8e;border-radius:2px 2px 1px 1px;box-shadow:0 1px 2px 1px rgba(40,40,40,.9)">
  <div class="a" style="left:0;top:0;width:210px;height:10.5px;border-radius:2px 2px 0 0;background:linear-gradient(180deg,rgba(255,255,255,.22) 0,rgba(255,255,255,0) 25%,rgba(255,255,255,0) 62%,rgba(255,255,255,.34) 100%),linear-gradient(90deg,#8a8a8a 0,#6a6a6a 12%,#2a2a2a 28%,#0c0c0c 45%,#101010 80%,#2a2a2a 100%)"></div>
  <div class="a" style="left:0;top:0;width:210px;height:1px;background:#9a9a9a;opacity:.8"></div>
  <div class="a" style="left:3.5px;top:3px;width:5px;height:5px;background:#dfeaea;border:0.5px solid #9ab"></div>
  <div class="t" style="left:11px;top:2.6px;font-size:5.6px;color:#111;text-shadow:0 0 2px #fff,0 0 3px #ddd;font-weight:bold">层别管理员</div>
  <div class="a" style="left:176.5px;top:0.5px;width:11.5px;height:6.5px;background:linear-gradient(#cfcfcf,#8d8d8d);border:0.5px solid #555;border-radius:0 0 0 2px"></div>
  <div class="t" style="left:180.5px;top:1px;font-size:5px;color:#fff;font-weight:bold">?</div>
  <div class="a" style="left:188px;top:0.5px;width:19px;height:6.5px;background:linear-gradient(#e9a08f,#cf4a30 45%,#b82a12);border:0.5px solid #5a1a10;border-radius:0 0 2px 0"></div>
  <div class="t" style="left:195px;top:0.6px;font-size:5.4px;color:#fff;font-weight:bold">x</div>
  <!-- client -->
  <div id="dcl" class="a" style="left:2.8px;top:11.5px;width:204.6px;height:169px;background:#f1f1f1">
    <!-- list -->
    <div class="a" style="left:4.3px;top:4.3px;width:196px;height:106.5px;background:#fffef8;border:0.6px solid #8a8a8a;overflow:hidden">
      <div class="a" style="left:0;top:0;width:196px;height:6.2px;background:#ececec;border-bottom:0.6px solid #9a9a9a"></div>
      <div class="a" style="left:20px;top:0;width:0.6px;height:100px;background:#e4e2d8"></div>
      <div class="a" style="left:40px;top:0;width:0.6px;height:100px;background:#e4e2d8"></div>
      <div class="a" style="left:80px;top:0;width:0.6px;height:100px;background:#e4e2d8"></div>
      <div class="a" style="left:155.2px;top:0;width:0.6px;height:100px;background:#e4e2d8"></div>
      <div class="a" style="left:20px;top:0;width:0.7px;height:6.2px;background:#999"></div>
      <div class="a" style="left:40px;top:0;width:0.7px;height:6.2px;background:#999"></div>
      <div class="a" style="left:80px;top:0;width:0.7px;height:6.2px;background:#999"></div>
      <div class="a" style="left:155.2px;top:0;width:0.7px;height:6.2px;background:#999"></div>
      <div class="a" style="left:0;top:12.9px;width:196px;height:88px;background:repeating-linear-gradient(#fffef8 0,#fffef8 6.2px,#ebe8dc 6.2px,#ebe8dc 6.8px);opacity:.4"></div>
      <div class="a" style="left:0;top:6.3px;width:196px;height:6.6px;background:#ffe70e"></div>
      <div class="t" style="left:2px;top:0.8px;font-size:4.9px;color:#000">层</div>
      <div class="t" style="left:22px;top:0.8px;font-size:4.9px;color:#000">可 . . .</div>
      <div class="t" style="left:42px;top:0.8px;font-size:4.9px;color:#000">限制的图层&nbsp;&nbsp;关</div>
      <div class="t" style="left:82px;top:0.8px;font-size:4.9px;color:#000">图层名称</div>
      <div class="t" style="left:157.6px;top:0.8px;font-size:4.9px;color:#000">图素数目</div>
      <div class="t" style="left:1.6px;top:7.3px;font-size:4.6px;color:#554">1</div>
      <div class="t" style="left:27px;top:6.2px;font-size:6.4px;color:#d2280a;font-weight:bold">✓</div>
      <!-- hscroll -->
      <div class="a" style="left:0;top:100.2px;width:196px;height:5.8px;background:#f0f0f0;border-top:0.5px solid #ddd"></div>
      <div class="a" style="left:6.4px;top:100.8px;width:154px;height:4.6px;background:linear-gradient(#f2f2f2,#d4d4d4);border:0.5px solid #a0a0a0;border-radius:1px"></div>
      <div class="t" style="left:1.6px;top:100.9px;font-size:3.6px;color:#444">◂</div>
      <div class="t" style="left:191.6px;top:100.9px;font-size:3.6px;color:#444">▸</div>
      <div class="t" style="left:81px;top:101.2px;font-size:3.4px;color:#777">⦀</div>
    </div>

    <!-- group: 作图层 -->
    <div class="gb" style="left:5.2px;top:117.6px;width:95.5px;height:46.4px"></div>
    <div class="t lb" style="left:9px;top:115.4px;background:#f1f1f1;padding:0 1px">作图层</div>
    <div class="t lb" style="left:7.4px;top:123.1px">编号:</div>
    <div class="a inp" style="left:7.4px;top:128.3px;width:13.2px;height:7.6px"></div>
    <div class="t" style="left:8.6px;top:130px;font-size:4.4px;color:#333">10</div>
    <div class="t lb" style="left:27.4px;top:124.4px">名称:</div>
    <div class="a inp" style="left:27.2px;top:128.3px;width:69.6px;height:7.6px"></div>
    <div class="t lb" style="left:7.4px;top:140.3px">群组:</div>
    <div class="a inp" style="left:7.4px;top:145.3px;width:49.6px;height:7.4px"></div>
    <div class="a btn" style="left:67.3px;top:145px;width:30.2px;height:8px">选择</div>
    <div class="a" style="left:8.6px;top:158.4px;width:4.2px;height:4.2px;background:#fff;border:0.6px solid #555"></div>
    <div class="t" style="left:8.7px;top:157.9px;font-size:4.6px;color:#111;font-weight:bold">✓</div>
    <div class="t lb" style="left:15.6px;top:157.9px">使作图层永远显示</div>
    <!-- group: 图层的显示 -->
    <div class="gb" style="left:103.8px;top:117.6px;width:49.8px;height:33.4px"></div>
    <div class="t lb" style="left:106.4px;top:115.4px;background:#f1f1f1;padding:0 1px">图层的显示:</div>
    <div class="a rad" style="left:107.4px;top:123.4px"></div><div class="t lb" style="left:114px;top:123.2px">全部</div>
    <div class="a rad" style="left:107.4px;top:130.1px"><i></i></div><div class="t lb" style="left:114px;top:129.9px">使用的</div>
    <div class="a rad" style="left:107.4px;top:136.8px"></div><div class="t lb" style="left:114px;top:136.6px">命名的</div>
    <div class="a rad" style="left:107.4px;top:143.6px"></div><div class="t lb" style="left:114px;top:143.4px">使用的或命名的</div>
    <!-- group: 显示的图层 -->
    <div class="gb" style="left:156.6px;top:117.6px;width:43.2px;height:33.4px"></div>
    <div class="t lb" style="left:159.4px;top:115.4px;background:#f1f1f1;padding:0 1px">显示的图层</div>
    <div class="a btn" style="left:163px;top:126px;width:30.4px;height:8.4px">全开</div>
    <div class="a btn" style="left:163px;top:136.6px;width:30.4px;height:8.4px">全关</div>
    <!-- bottom buttons -->
    <div class="a btn" style="left:106px;top:156.8px;width:29.6px;height:8.4px">确定</div>
    <div class="a btn" style="left:138.4px;top:156.8px;width:29.6px;height:8.4px">取消</div>
    <div class="a btn" style="left:170.6px;top:156.8px;width:29.6px;height:8.4px">说明</div>
  </div>
</div>


<!-- ================= SUBTITLE & TIMER ================= -->
<div class="t" id="sub" style="left:376.6px;top:483px;font-size:28.8px;letter-spacing:0.75px;font-weight:500;-webkit-text-stroke:0.35px #fff;color:#fff;font-family:'Noto Sans CJK SC','Liberation Sans',sans-serif;line-height:30px;text-shadow:0 0 1px #000,0 0 2px #000">输入一个10点回车啊</div>
<div class="a" style="left:987px;top:45.8px;width:20px;height:20px;border-radius:50%;background:linear-gradient(160deg,#47a6f4,#2f8fee 60%,#3a9cf2);border:1px solid #f4f8ff;box-shadow:0 0 1px #9cf"></div>
<div class="t" style="left:987px;top:53.4px;width:20px;text-align:center;font-size:4.9px;color:#fff">03:59</div>

<!-- ================= TASKBAR ================= -->
<div id="task" class="a">
  <div class="a" style="left:3.6px;top:1.2px;width:14px;height:14px;border-radius:50%;background:radial-gradient(circle at 45% 40%,#9fd0f0 0,#3a86c8 45%,#1a4f8a 100%);box-shadow:0 0 1.5px #cfe6ff"></div>
  <div class="a" style="left:7.1px;top:4.6px;width:3.2px;height:3.2px;background:#e8582a;border-radius:1px 0 0 0"></div><div class="a" style="left:10.7px;top:4.6px;width:3.2px;height:3.2px;background:#7cc242;border-radius:0 1px 0 0"></div><div class="a" style="left:7.1px;top:8.2px;width:3.2px;height:3.2px;background:#3a9be0;border-radius:0 0 0 1px"></div><div class="a" style="left:10.7px;top:8.2px;width:3.2px;height:3.2px;background:#f6c320;border-radius:0 0 1px 0"></div>
  <div class="a" style="left:29.5px;top:3.2px;width:11px;height:11px;background:#1c2a6c;border-radius:1.5px;font-size:5.6px;color:#8fb8ff;text-align:center;line-height:10.6px;font-weight:bold;border:0.6px solid #7aa0e8;">Ps</div>
  <div class="a" style="left:55.0px;top:3.2px;width:11px;height:11px;background:#d82a2a;border-radius:1.5px;font-size:7px;color:#fff;text-align:center;line-height:10.6px;font-weight:bold;border-radius:3px;">✿</div>
  <div class="a" style="left:79.5px;top:3.2px;width:11px;height:11px;background:#1e8cf0;border-radius:1.5px;font-size:7px;color:#fff;text-align:center;line-height:10.6px;font-weight:bold;border-radius:50%;border:0.8px solid #dff;font-style:italic;">K</div>
  <div class="a" style="left:104.0px;top:3.2px;width:11px;height:11px;background:#d82a2a;border-radius:1.5px;font-size:7px;color:#fff;text-align:center;line-height:10.6px;font-weight:bold;border-radius:3px;">✿</div>
  <div class="a" style="left:128.5px;top:3.2px;width:11px;height:11px;background:#14161c;border-radius:1.5px;font-size:5.8px;color:#cfd8e6;text-align:center;line-height:10.6px;font-weight:bold;border:0.6px solid #9ab;">Lr</div>
  <div class="a" style="left:153.5px;top:3.2px;width:11px;height:11px;background:#0c2430;border-radius:1.5px;font-size:5.8px;color:#38c8f0;text-align:center;line-height:10.6px;font-weight:bold;border:0.6px solid #2ab0e0;">Ps</div>
  <div class="a" style="left:178.5px;top:3.2px;width:11px;height:11px;background:#2a3a5a;border-radius:1.5px;font-size:7.5px;color:#e8eef8;text-align:center;line-height:10.6px;font-weight:bold;border-radius:1px;height:9px;top:4.4px;line-height:8.6px;">▦</div>
  <div class="a" style="left:202.5px;top:3.2px;width:11px;height:11px;background:#dbe6ee;border-radius:1.5px;font-size:6.5px;color:#e0a030;text-align:center;line-height:10.6px;font-weight:bold;width:8.6px;border:0.5px solid #9ab;">≡</div>
  <div class="a" style="left:228px;top:4px;width:8.4px;height:7px;border-radius:50%;background:#e8e8ee;border:0.7px solid #c24a4a"></div><div class="a" style="left:234px;top:9.6px;width:4px;height:1.4px;background:#889;transform:rotate(40deg)"></div>
  <div class="a" style="left:253.0px;top:3.2px;width:11px;height:11px;background:#e8303a;border-radius:1.5px;font-size:8px;color:#fff;text-align:center;line-height:10.6px;font-weight:bold;border-radius:2.4px;line-height:10.2px;">◎</div>
  <div class="a" style="left:276.5px;top:3.2px;width:11px;height:11px;background:#1ab394;border-radius:1.5px;font-size:7.5px;color:#fff;text-align:center;line-height:10.6px;font-weight:bold;border-radius:50%;">&gt;</div>
  <div class="a" style="left:300.5px;top:3.2px;width:11px;height:11px;background:#2a7be0;border-radius:1px"></div><svg class="a" style="left:300.5px;top:3.2px" width="11" height="11" viewBox="0 0 11 11"><path d="M1.4,3 L5,5.4 L8.6,1.6 L7.6,6.2 L9.8,8 L6.2,8 L4.6,10 L4.4,7 Z" fill="#fff"/></svg>
  
  <div class="a" style="left:319.4px;top:1px;width:62.0px;height:14.4px;border:0.6px solid rgba(200,225,250,.38);border-radius:1.6px;background:linear-gradient(rgba(255,255,255,.28),rgba(255,255,255,.10) 45%,rgba(255,255,255,.02) 50%,rgba(255,255,255,.12));overflow:hidden"><div class="a" style="left:4px;top:3px;width:7px;height:6px;border-radius:50%;background:#4ec83c"></div><div class="a" style="left:8px;top:6px;width:6.4px;height:5.4px;border-radius:50%;background:#eef4ee"></div><div class="t" style="left:16.6px;top:5px;font-size:4.7px;color:#fff;text-shadow:0 0 1px #124">微信</div></div>
  <div class="a" style="left:382.8px;top:1px;width:61.19999999999999px;height:14.4px;border:0.6px solid rgba(200,225,250,.38);border-radius:1.6px;background:linear-gradient(rgba(255,255,255,.28),rgba(255,255,255,.10) 45%,rgba(255,255,255,.02) 50%,rgba(255,255,255,.12));overflow:hidden"><div class="a" style="left:4.2px;top:2.6px;width:10px;height:10px;border-radius:50%;background:#5cc23a;border:0.8px solid #e8f8e0"></div><div class="a" style="left:6.8px;top:6.4px;width:5px;height:2.2px;border-radius:1px;background:#eaf8e2"></div><div class="t" style="left:16.6px;top:5px;font-size:4.7px;color:#fff;text-shadow:0 0 1px #124">课程学习视图 - ...</div></div>
  <div class="a" style="left:445.6px;top:1px;width:61.799999999999955px;height:14.4px;border:0.6px solid rgba(200,225,250,.38);border-radius:1.6px;background:linear-gradient(rgba(255,255,255,.28),rgba(255,255,255,.10) 45%,rgba(255,255,255,.02) 50%,rgba(255,255,255,.12));overflow:hidden"><div class="a" style="left:5.4px;top:2.2px;width:7.6px;height:10.6px;background:#fafafa;border-radius:0.6px;box-shadow:0 0 0.6px #567"></div><div class="t" style="left:16.6px;top:5px;font-size:4.7px;color:#fff;text-shadow:0 0 1px #124">欢迎使用百度网盘</div></div>
  <div class="a" style="left:508.8px;top:1px;width:61.80000000000001px;height:14.4px;border:0.6px solid rgba(200,225,250,.38);border-radius:1.6px;background:linear-gradient(rgba(255,255,255,.28),rgba(255,255,255,.10) 45%,rgba(255,255,255,.02) 50%,rgba(255,255,255,.12));overflow:hidden"><div class="a" style="left:5px;top:2.2px;width:7.2px;height:10.6px;background:linear-gradient(90deg,#e8c860,#f6e49a 55%,#e2bc50);border-radius:1px;transform:skewY(-6deg)"></div><div class="t" style="left:16.6px;top:5px;font-size:4.7px;color:#fff;text-shadow:0 0 1px #124">masterCAM9.1...</div></div>
  <div class="a" style="left:572px;top:1px;width:62px;height:14.4px;border:0.6px solid rgba(200,225,250,.38);border-radius:1.6px;background:linear-gradient(rgba(255,255,255,.28),rgba(255,255,255,.10) 45%,rgba(255,255,255,.02) 50%,rgba(255,255,255,.12));overflow:hidden"><div class="a" style="left:4.6px;top:2.4px;width:8.4px;height:6.6px;background:#2848c8;border:0.9px solid #e4e8f0;transform:skewY(-8deg)"></div><div class="a" style="left:5.6px;top:10.6px;width:7px;height:1.4px;background:#d8dce4"></div><div class="t" style="left:16.6px;top:5px;font-size:4.7px;color:#fff;text-shadow:0 0 1px #124">计算机</div></div>
  <div class="a" style="left:635.4px;top:1px;width:61.200000000000045px;height:14.4px;border:0.6px solid rgba(200,225,250,.38);border-radius:1.6px;background:linear-gradient(rgba(255,255,255,.28),rgba(255,255,255,.10) 45%,rgba(255,255,255,.02) 50%,rgba(255,255,255,.12));overflow:hidden"><div class="a" style="left:5px;top:2.2px;width:7.2px;height:10.6px;background:linear-gradient(90deg,#e8c860,#f6e49a 55%,#e2bc50);border-radius:1px;transform:skewY(-6deg)"></div><div class="t" style="left:16.6px;top:5px;font-size:4.7px;color:#fff;text-shadow:0 0 1px #124">Administrator</div></div>
  <div class="a" style="left:698px;top:1px;width:61px;height:14.4px;border:0.6px solid rgba(200,225,250,.38);border-radius:1.6px;background:linear-gradient(rgba(255,255,255,.28),rgba(255,255,255,.10) 45%,rgba(255,255,255,.02) 50%,rgba(255,255,255,.12));overflow:hidden"><div class="a" style="left:3.4px;top:2.6px;width:8px;height:9.6px;background:#2b579a;border:0.5px solid #cfe"></div><div class="t" style="left:4.6px;top:4.2px;font-size:5.8px;color:#fff;font-weight:bold">W</div><div class="a" style="left:10.6px;top:3.6px;width:3.6px;height:7.6px;background:#f2f4f8"></div><div class="t" style="left:16.6px;top:5px;font-size:4.7px;color:#fff;text-shadow:0 0 1px #124">CADCAM应用技...</div></div>
  <div class="a" style="left:760.6px;top:1px;width:61.799999999999955px;height:14.4px;border:0.6px solid #cfe2f4;border-radius:1.6px;background:linear-gradient(#9fc2e2,#6f9fcc 45%,#5d90c0 50%,#7eaad2);overflow:hidden"><div class="a" style="left:3.4px;top:1.4px;width:11.4px;height:12px;background:#f4f0ea;border:0.6px solid #555"></div><div class="a" style="left:4px;top:2.2px;width:10.2px;height:3px;background:#d02818"></div><div class="a" style="left:7.4px;top:5px;width:3px;height:7.6px;background:#c8281a"></div><div class="a" style="left:5px;top:7px;width:2.2px;height:5px;background:#777"></div><div class="t" style="left:16.6px;top:5px;font-size:4.7px;color:#fff;text-shadow:0 0 1px #124">Mastercam Mill...</div></div>
  <div class="t" style="left:826.0px;top:6.0px;width:8px;text-align:center;font-size:5.2px;color:#aab4c0;font-family:'DejaVu Sans',sans-serif">▬</div>
  <div class="t" style="left:834.4px;top:4.7px;width:8px;text-align:center;font-size:7.7px;color:#2838a8;font-family:'DejaVu Sans',sans-serif">●</div>
  <div class="t" style="left:843.0px;top:5.5px;width:8px;text-align:center;font-size:6.2px;color:#dfe6ee;font-family:'DejaVu Sans',sans-serif">⌐</div>
  <div class="t" style="left:852.0px;top:5.0px;width:8px;text-align:center;font-size:7.2px;color:#e84a5a;font-family:'DejaVu Sans',sans-serif">✿</div>
  <div class="t" style="left:862.0px;top:5.2px;width:8px;text-align:center;font-size:6.7px;color:#2a50c0;font-family:'DejaVu Sans',sans-serif">◯</div>
  <div class="t" style="left:872.0px;top:4.7px;width:8px;text-align:center;font-size:7.7px;color:#f0c040;font-family:'DejaVu Sans',sans-serif">●</div>
  <div class="t" style="left:881.4px;top:4.7px;width:8px;text-align:center;font-size:7.7px;color:#f08020;font-family:'DejaVu Sans',sans-serif">■</div>
  <div class="t" style="left:891.0px;top:4.7px;width:8px;text-align:center;font-size:7.7px;color:#e8f2ff;font-family:'DejaVu Sans',sans-serif">◉</div>
  <div class="t" style="left:900.6px;top:4.7px;width:8px;text-align:center;font-size:7.7px;color:#d02828;font-family:'DejaVu Sans',sans-serif">■</div>
  <div class="t" style="left:910.0px;top:5.0px;width:8px;text-align:center;font-size:7.2px;color:#38c848;font-family:'DejaVu Sans',sans-serif">●</div>
  <div class="t" style="left:919.6px;top:4.7px;width:8px;text-align:center;font-size:7.7px;color:#b8c0c8;font-family:'DejaVu Sans',sans-serif">◉</div>
  <div class="t" style="left:929.0px;top:5.0px;width:8px;text-align:center;font-size:7.2px;color:#e03030;font-family:'DejaVu Sans',sans-serif">◉</div>
  <div class="t" style="left:938.6px;top:5.0px;width:8px;text-align:center;font-size:7.2px;color:#e83838;font-family:'DejaVu Sans',sans-serif">S</div>
  <div class="t" style="left:948.0px;top:4.7px;width:8px;text-align:center;font-size:7.7px;color:#58c838;font-family:'DejaVu Sans',sans-serif">◉</div>
  <div class="t" style="left:958.0px;top:4.7px;width:8px;text-align:center;font-size:7.7px;color:#f0f4f8;font-family:'DejaVu Sans',sans-serif">▣</div>
  <div class="t" style="left:967.6px;top:5.2px;width:8px;text-align:center;font-size:6.7px;color:#f0f4f8;font-family:'DejaVu Sans',sans-serif">◨</div>
  <div class="t" style="left:977.6px;top:5.2px;width:8px;text-align:center;font-size:6.7px;color:#dfe6ee;font-family:'DejaVu Sans',sans-serif">◖</div>
  <div class="t" style="left:993px;top:2.6px;width:21px;text-align:center;font-size:4.7px;color:#fff">18:54</div>
  <div class="t" style="left:991px;top:9.3px;width:25px;text-align:center;font-size:4.7px;color:#fff">2024/1/3</div>
  <div class="a" style="left:1018.4px;top:0;width:6px;height:17px;border-left:0.6px solid rgba(255,255,255,.5);background:linear-gradient(rgba(255,255,255,.35),rgba(255,255,255,.08))"></div>
</div>

</body>
</html>
